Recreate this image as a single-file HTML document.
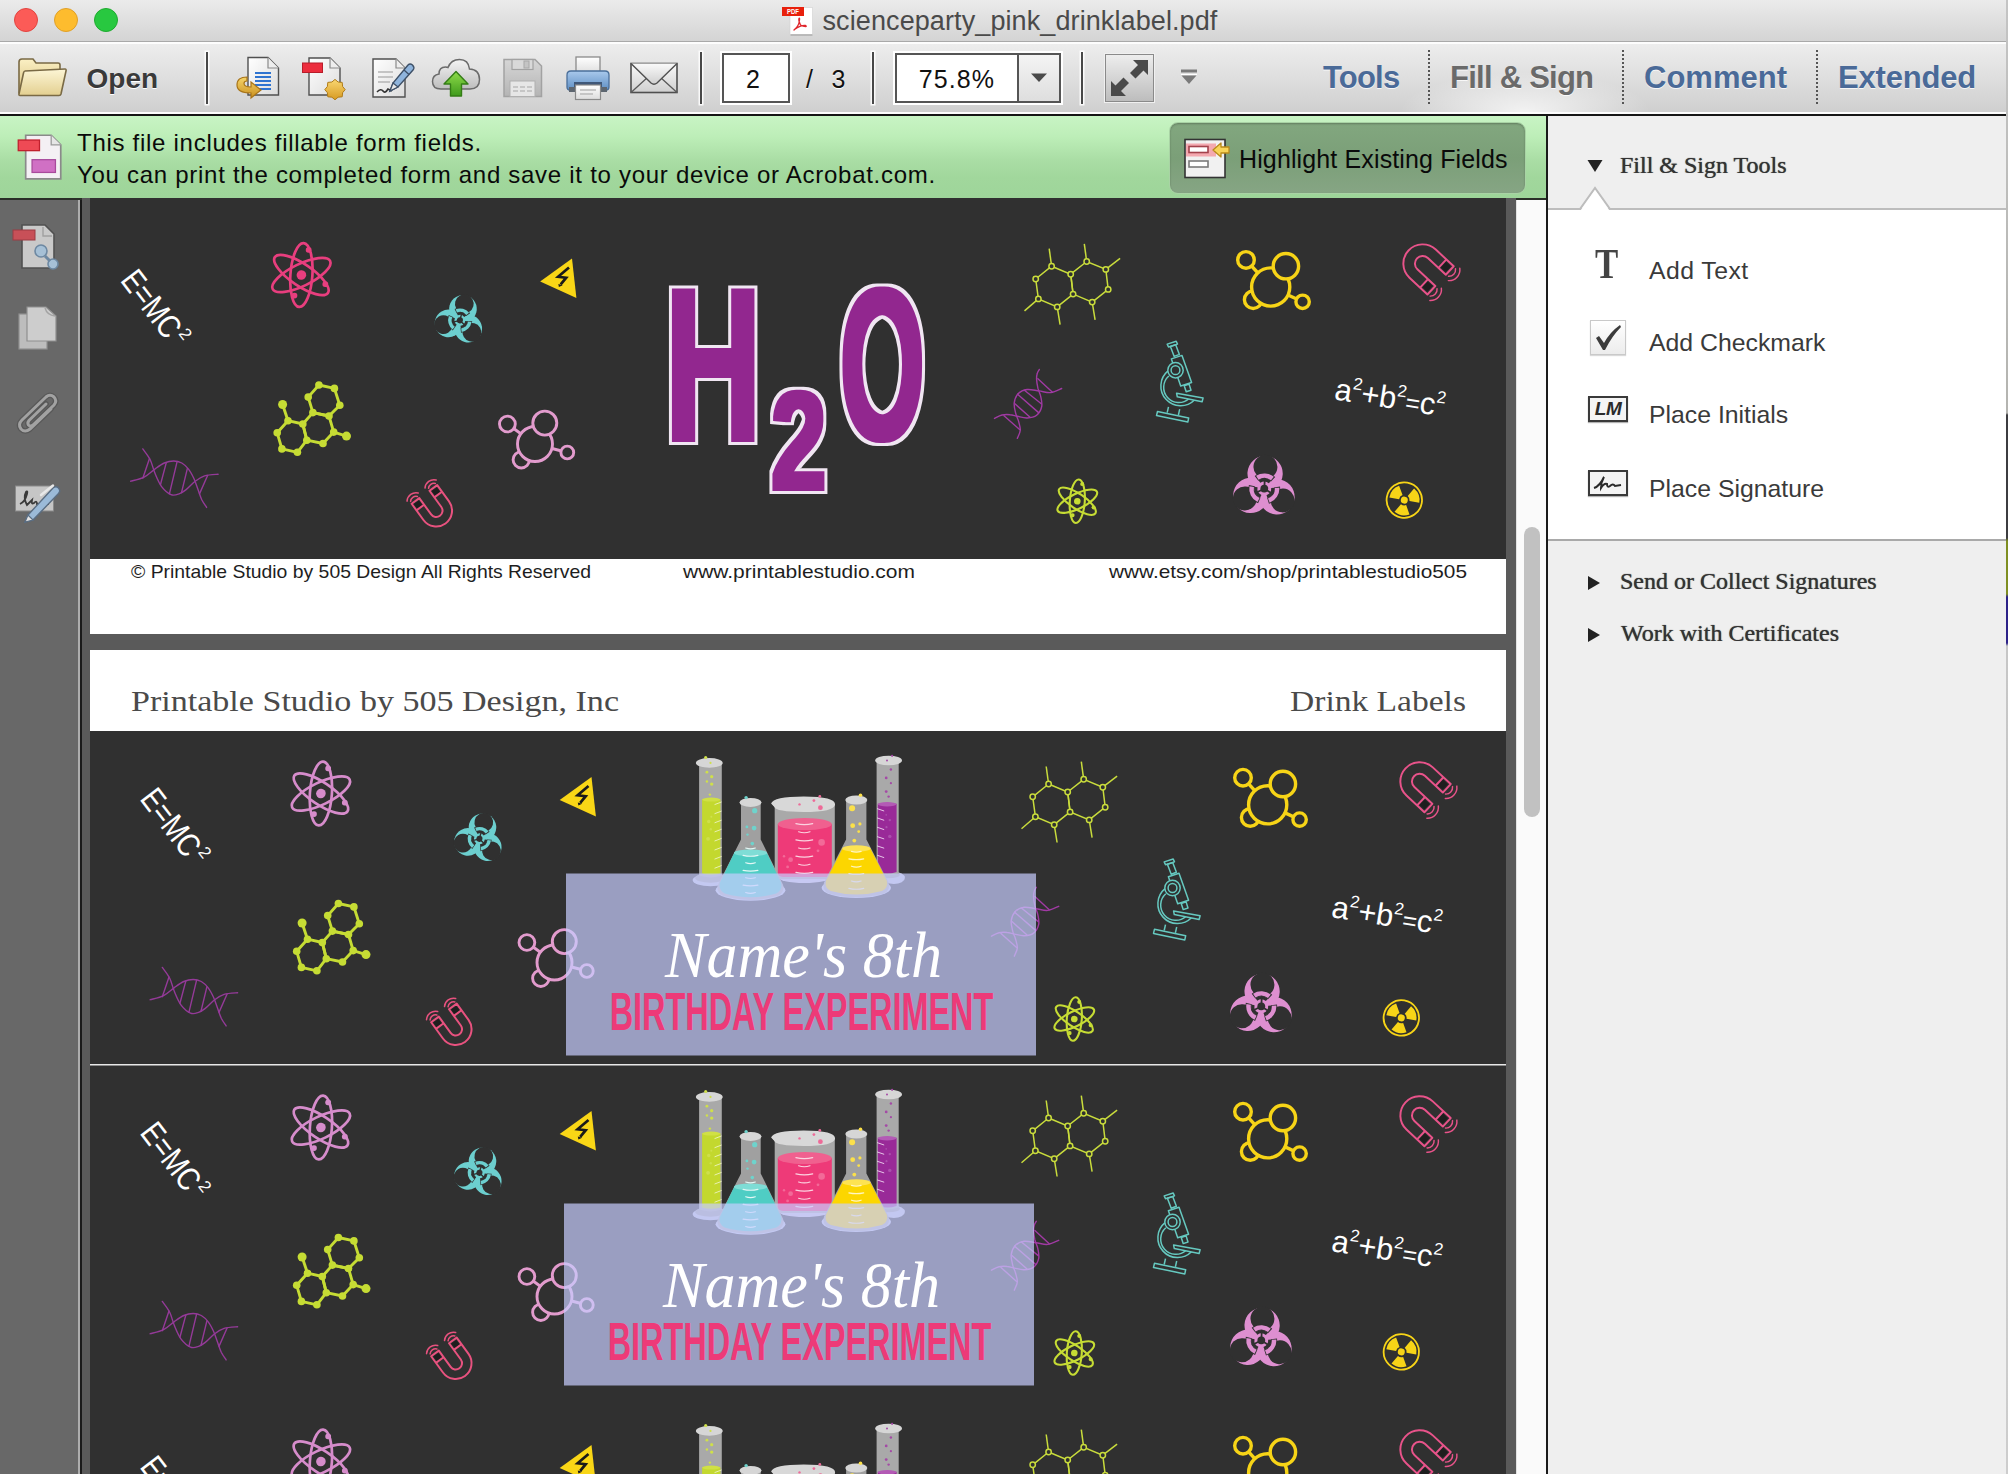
<!DOCTYPE html>
<html><head><meta charset="utf-8"><title>scienceparty_pink_drinklabel.pdf</title>
<style>
*{box-sizing:border-box;margin:0;padding:0}
html,body{width:2008px;height:1474px;overflow:hidden;background:#2a2d33;font-family:"Liberation Sans",sans-serif}
.abs{position:absolute}
#win{position:absolute;left:0;top:0;width:2006px;height:1474px;overflow:hidden;background:#ececec}
#titlebar{position:absolute;left:0;top:0;width:2006px;height:42px;background:linear-gradient(#ebebeb,#d4d4d4);border-bottom:1px solid #a9a9a9}
.tl{position:absolute;top:8px;width:24px;height:24px;border-radius:50%}
#title{position:absolute;left:822.5px;top:4px;font-size:27px;line-height:34px;color:#4a4a4a;white-space:nowrap;letter-spacing:0.1px}
#toolbar{position:absolute;left:0;top:42px;width:2006px;height:72px;background:linear-gradient(#ededed,#e0e0e0 45%,#cfcfcf);border-top:2px solid #fdfdfd;border-bottom:2px solid #fdfdfd}
#tbline{position:absolute;left:0;top:114px;width:2006px;height:2px;background:#161616}
.vsep{position:absolute;top:52px;width:2px;height:52px;background:#484848;box-shadow:0 0 0 1.5px rgba(255,255,255,.85)}
.dsep{position:absolute;top:50px;width:0;height:54px;border-left:2px dotted #555}
.tab{position:absolute;top:59px;font-weight:bold;font-size:31px;line-height:38px;color:#4a6a98;white-space:nowrap;text-shadow:0 1px 0 rgba(255,255,255,.8)}
.tbtxt{position:absolute;white-space:nowrap;color:#111}
#green{position:absolute;left:0;top:116px;width:1546px;height:84px;background:linear-gradient(#c8f4c4 0%,#bdeeb8 25%,#a9dda4 55%,#a1d79c 75%,#9ed59a 100%);border-bottom:2px solid #2a2f28}
#green .t{position:absolute;left:77px;margin-top:-1px;font-size:24px;letter-spacing:.72px;line-height:28px;color:#0a0a0a;white-space:nowrap}
#hbtn{position:absolute;left:1169px;top:122px;width:357px;height:72px;border-radius:9px;background:linear-gradient(#82a77f,#7b9f78 50%,#86a584);border:1px solid #a9d3a5;box-shadow:inset 0 1px 2px rgba(0,0,0,.25)}
#hbtn .t{position:absolute;left:69px;top:20px;font-size:25px;letter-spacing:.13px;line-height:32px;color:#0a0a0a;white-space:nowrap}
#side{position:absolute;left:0;top:200px;width:78px;height:1276px;background:#686868}
#sideline{position:absolute;left:79px;top:200px;width:3px;height:1276px;background:#1a1a1a}
#doc{position:absolute;left:82px;top:198px;width:1434px;height:1276px;background:#5a5a5a;overflow:hidden}
#scroll{position:absolute;left:1516px;top:200px;width:30px;height:1276px;background:#fafafa;border-left:1px solid #e2e2e2}
#thumb{position:absolute;left:1524px;top:527px;width:16px;height:290px;border-radius:8px;background:#c1c1c1}
#panel{position:absolute;left:1546px;top:116px;width:460px;height:1358px;background:#efefef;border-left:2px solid #1a1a1a}
.ptxt{position:absolute;font-size:24.8px;line-height:30px;color:#3a3a3a;white-space:nowrap}
.stxt{position:absolute;font-family:"Liberation Serif",serif;font-size:24px;line-height:28px;color:#333;white-space:nowrap;text-shadow:0 0 1px #333,0 1px 0 #fff}
</style></head><body>
<div id="win">
<div id="titlebar">
<div class="tl" style="left:14px;background:#fc5b57;border:1px solid #e2443f"></div>
<div class="tl" style="left:54px;background:#fdbc2e;border:1px solid #e0a028"></div>
<div class="tl" style="left:94px;background:#28c840;border:1px solid #1eab2f"></div>
<svg class="abs" style="left:780px;top:4px" width="36" height="34" viewBox="0 0 36 34">
<rect x="10" y="3.5" width="22.5" height="27" fill="#fff" stroke="#d0d0d0" stroke-width=".6"/>
<path d="M10.5 31 H32.5" stroke="#9a9a9a" stroke-width="1"/>
<rect x="2" y="3" width="22" height="9" fill="#e8200c"/>
<text x="13" y="10.3" font-family="Liberation Sans,sans-serif" font-weight="bold" font-size="7.5" fill="#fff" text-anchor="middle" textLength="12" lengthAdjust="spacingAndGlyphs">PDF</text>
<path d="M14.5 25.5 Q19 22 19.5 16 Q19.8 13.5 19 14.5 Q18.3 17 20.5 21 Q23 22.5 25.5 22.5 Q27 22.3 25.5 21.5 Q21 21 14.5 25.5 Q13.5 26.5 14.5 25.5" fill="none" stroke="#e0262c" stroke-width="1.3" stroke-linecap="round"/>
</svg>
<div id="title">scienceparty_pink_drinklabel.pdf</div>
</div>
<div id="toolbar"></div>
<div id="tbline"></div>
<!-- toolbar items -->
<svg class="abs" style="left:16px;top:55px" width="52" height="44" viewBox="0 0 52 44">
<defs><linearGradient id="fg1" x1="0" y1="0" x2="0" y2="1"><stop offset="0" stop-color="#fbf0c4"/><stop offset="1" stop-color="#d9c27f"/></linearGradient>
<linearGradient id="fg2" x1="0" y1="0" x2="0" y2="1"><stop offset="0" stop-color="#fdf6d6"/><stop offset="1" stop-color="#e3cf90"/></linearGradient></defs>
<path d="M3 7 Q3 4 6 4 L17 4 L20 8 L42 8 Q44 8 44 10 L44 38 L3 38 Z" fill="url(#fg1)" stroke="#7a6a45" stroke-width="1.6"/>
<path d="M9 16 L49 14 Q50.5 14 50 16 L45 39 Q44.6 40.5 43 40.5 L4 40.5 Q2.6 40.5 3 39 L7.5 18 Q8 16 9 16Z" fill="url(#fg2)" stroke="#7a6a45" stroke-width="1.6"/>
</svg>
<div class="tbtxt" style="left:86.5px;top:60px;font-weight:bold;font-size:28px;line-height:38px;color:#3a3a3a;text-shadow:0 1px 0 #fff">Open</div>
<div class="vsep" style="left:206px"></div>
<!-- icon1: export doc -->
<svg class="abs" style="left:234px;top:54px" width="48" height="48" viewBox="0 0 48 48">
<defs><linearGradient id="dg" x1="0" y1="0" x2="1" y2="1"><stop offset="0" stop-color="#ffffff"/><stop offset="1" stop-color="#dcdcdc"/></linearGradient>
<linearGradient id="ag" x1="0" y1="0" x2="0" y2="1"><stop offset="0" stop-color="#f6d56a"/><stop offset="1" stop-color="#c98f1e"/></linearGradient></defs>
<path d="M14 3.5 L34 3.5 L44.5 14 L44.5 41 L14 41 Z" fill="url(#dg)" stroke="#505050" stroke-width="1.4"/>
<path d="M34 3.5 L34 14 L44.5 14" fill="#eee" stroke="#8a8a8a" stroke-width="1.2"/>
<g stroke="#2f74d0" stroke-width="2"><path d="M21 19H37M21 23H37M21 27H37M21 31H37M24 35H37"/></g>
<path d="M13 23 Q3 23 3 31 Q3 39 17 39 L17 44 L27 36 L17 28 L17 33 Q10 33 10 29.5 Q10 27 13 27Z" fill="url(#ag)" stroke="#a87418" stroke-width="1.2"/>
</svg>
<!-- icon2: create pdf -->
<svg class="abs" style="left:300px;top:54px" width="48" height="48" viewBox="0 0 48 48">
<defs><linearGradient id="sg" x1="0" y1="0" x2="0" y2="1"><stop offset="0" stop-color="#f9d772"/><stop offset="1" stop-color="#d79a22"/></linearGradient></defs>
<path d="M9 4 L30 4 L40 14 L40 41 L9 41 Z" fill="url(#dg)" stroke="#505050" stroke-width="1.4"/>
<path d="M30 4 L30 14 L40 14" fill="#eee" stroke="#8a8a8a" stroke-width="1.2"/>
<rect x="2.5" y="9" width="20" height="9.5" fill="#ec2d3d" stroke="#b81d2a" stroke-width="1"/>
<path d="M35 25.4 L38.1 28 L42.2 28.4 L42.6 32.5 L45.2 35.6 L42.6 38.7 L42.2 42.8 L38.1 43.2 L35 45.8 L31.9 43.2 L27.8 42.8 L27.4 38.7 L24.8 35.6 L27.4 32.5 L27.8 28.4 L31.9 28Z" fill="url(#sg)" stroke="#b07c18" stroke-width="1"/>
</svg>
<!-- icon3: edit/sign doc -->
<svg class="abs" style="left:368px;top:54px" width="50" height="48" viewBox="0 0 50 48">
<path d="M5 5 L28 5 L37 14 L37 43 L5 43 Z" fill="url(#dg)" stroke="#505050" stroke-width="1.4"/>
<path d="M28 5 L28 14 L37 14" fill="#eee" stroke="#8a8a8a" stroke-width="1.2"/>
<g stroke="#b5b5b5" stroke-width="1.6"><path d="M10 18H25M10 23H25M10 28H22"/></g>
<path d="M9 38 Q13 34 15 37 Q17 40 20 35 L24 37" fill="none" stroke="#333" stroke-width="1.6"/>
<path d="M22 37 L25 29 L40 11 Q42 9 44.5 11 Q47 13.5 45 16 L30 33 Z" fill="#8fb4dc" stroke="#3d4f66" stroke-width="1.4"/>
<path d="M22 37 L25 29 L30 33Z" fill="#e9e9e9" stroke="#3d4f66" stroke-width="1.2"/>
<path d="M36 16 L41 20.5" stroke="#3d4f66" stroke-width="1.3"/>
</svg>
<!-- cloud -->
<svg class="abs" style="left:430px;top:55px" width="52" height="46" viewBox="0 0 52 46">
<defs><linearGradient id="cg" x1="0" y1="0" x2="0" y2="1"><stop offset="0" stop-color="#f4f4f4"/><stop offset="1" stop-color="#bdbdbd"/></linearGradient>
<linearGradient id="gg" x1="0" y1="0" x2="0" y2="1"><stop offset="0" stop-color="#8fdc4a"/><stop offset="1" stop-color="#3f9a1c"/></linearGradient></defs>
<path d="M11 34 Q2.5 34 2.5 26.5 Q2.5 20 9 19 Q9 12 15.5 12 Q17 12 18 12.5 Q21 4.5 29.5 4.5 Q38.5 4.5 39.5 14 Q49.5 14.5 49.5 24.5 Q49.5 34 40 34 Z" fill="url(#cg)" stroke="#6b6b6b" stroke-width="1.5"/>
<path d="M26 16.5 L38 29 L31.5 29 L31.5 41 L20.5 41 L20.5 29 L14 29 Z" fill="url(#gg)" stroke="#347d16" stroke-width="1.4" stroke-linejoin="round"/>
</svg>
<!-- floppy -->
<svg class="abs" style="left:501px;top:56px" width="44" height="44" viewBox="0 0 44 44">
<defs><linearGradient id="flg" x1="0" y1="0" x2="0" y2="1"><stop offset="0" stop-color="#d6d6d6"/><stop offset="1" stop-color="#b4b4b4"/></linearGradient></defs>
<path d="M3 3.5 L34 3.5 L40.5 10 L40.5 40.5 L3 40.5 Z" fill="url(#flg)" stroke="#a2a2a2" stroke-width="1.5"/>
<rect x="11" y="3.5" width="21" height="10" fill="#d9d9d9" stroke="#a2a2a2" stroke-width="1.2"/>
<rect x="23" y="5" width="5" height="7" fill="#c4c4c4" stroke="#a8a8a8" stroke-width="1"/>
<rect x="9" y="25" width="25" height="15.5" fill="#e6e6e6" stroke="#b0b0b0" stroke-width="1"/>
<g stroke="#c6c6c6" stroke-width="2" stroke-dasharray="5 2"><path d="M12 31H31M12 35H31"/></g>
</svg>
<!-- printer -->
<svg class="abs" style="left:564px;top:54px" width="48" height="48" viewBox="0 0 48 48">
<defs><linearGradient id="pg" x1="0" y1="0" x2="0" y2="1"><stop offset="0" stop-color="#a9c9ec"/><stop offset="1" stop-color="#5f8fc4"/></linearGradient>
<linearGradient id="wg" x1="0" y1="0" x2="0" y2="1"><stop offset="0" stop-color="#ffffff"/><stop offset="1" stop-color="#dcdcdc"/></linearGradient></defs>
<rect x="12" y="3" width="24" height="17" fill="url(#wg)" stroke="#8a8a8a" stroke-width="1.3"/>
<path d="M7 17 L41 17 Q45 17 45 21 L45 33 Q45 36 42 36 L6 36 Q3 36 3 33 L3 21 Q3 17 7 17Z" fill="url(#pg)" stroke="#4a6f9a" stroke-width="1.3"/>
<rect x="5" y="33" width="38" height="5" fill="#5d6670"/>
<rect x="10" y="28" width="28" height="5" fill="#3f5778"/>
<rect x="11.5" y="31" width="25" height="14.5" fill="url(#wg)" stroke="#8a8a8a" stroke-width="1.2"/>
<g stroke="#b9b9b9" stroke-width="1.3"><path d="M16 36H32M16 40H29"/></g>
</svg>
<!-- mail -->
<svg class="abs" style="left:629px;top:61px" width="50" height="34" viewBox="0 0 50 34">
<defs><linearGradient id="mg" x1="0" y1="0" x2="0" y2="1"><stop offset="0" stop-color="#fafafa"/><stop offset="1" stop-color="#cfcfcf"/></linearGradient></defs>
<rect x="2" y="2.5" width="46" height="29" fill="url(#mg)" stroke="#4f4f4f" stroke-width="1.6"/>
<path d="M2 31.5 L19 16 M48 31.5 L31 16" stroke="#5a5a5a" stroke-width="1.3" fill="none"/>
<path d="M2 2.5 L22 22 Q25 24.5 28 22 L48 2.5" fill="url(#mg)" stroke="#4f4f4f" stroke-width="1.4"/>
</svg>
<div class="vsep" style="left:700px"></div>
<div class="abs" style="left:720px;top:51px;width:72px;height:54px;background:#fff;border:2px solid #fff"><div style="width:100%;height:100%;border:2px solid #555"></div></div>
<div class="tbtxt" style="left:720px;top:61px;width:66px;text-align:center;font-size:25px;line-height:36px">2</div>
<div class="tbtxt" style="left:806px;top:61px;font-size:25px;line-height:36px;word-spacing:11.5px;text-shadow:0 1px 0 #fff">/ 3</div>
<div class="vsep" style="left:872px"></div>
<div class="abs" style="left:893px;top:51px;width:170px;height:54px;background:#fff;border:2px solid #fff"><div style="width:100%;height:100%;border:2px solid #555"></div></div>
<div class="abs" style="left:1017px;top:55px;width:42px;height:46px;background:linear-gradient(#f4f4f4,#dedede);border-left:2px solid #555"></div>
<svg class="abs" style="left:1029px;top:71px" width="20" height="12" viewBox="0 0 20 12"><path d="M2 2.5 L18 2.5 L10 11Z" fill="#4a4a4a"/></svg>
<div class="tbtxt" style="left:897px;top:61px;width:120px;text-align:center;font-size:25px;line-height:36px;letter-spacing:1.1px">75.8%</div>
<div class="vsep" style="left:1081px"></div>
<div class="abs" style="left:1105px;top:54px;width:49px;height:48px;border:1px solid #8a8a8a;background:linear-gradient(#ededed,#bdbdbd);box-shadow:0 0 0 1px #f0f0f0"></div>
<svg class="abs" style="left:1105px;top:54px" width="49" height="48" viewBox="0 0 49 48">
<g fill="#4a4a4a"><path d="M43 6 L43 21 L38.5 16.5 L30.5 24.5 L25 19 L33 11 L28 6Z"/><path d="M6 42 L6 27 L10.5 31.5 L18.5 23.5 L24 29 L16 37 L21 42Z"/></g>
</svg>
<svg class="abs" style="left:1180px;top:68px" width="18" height="20" viewBox="0 0 18 20"><rect x="1" y="1.5" width="16" height="3" fill="#7a7a7a"/><path d="M1.5 7.5 L16.5 7.5 L9 16Z" fill="#7a7a7a"/><path d="M1 6.5H17" stroke="#fff" stroke-width="1"/></svg>
<div class="abs" style="left:1400px;top:72px;width:250px;height:40px;background:radial-gradient(ellipse 125px 40px at 50% 100%,rgba(255,255,255,.75),rgba(255,255,255,0))"></div>
<div class="tab" style="left:1323px;letter-spacing:-.8px">Tools</div>
<div class="dsep" style="left:1428px"></div>
<div class="tab" style="left:1450px;color:#6a6a6a;letter-spacing:-.75px">Fill &amp; Sign</div>
<div class="dsep" style="left:1622px"></div>
<div class="tab" style="left:1644px">Comment</div>
<div class="dsep" style="left:1816px"></div>
<div class="tab" style="left:1838px;letter-spacing:-.2px">Extended</div>
<div id="green">
<svg class="abs" style="left:14px;top:15px" width="51" height="51" viewBox="0 0 48 48">
<path d="M11 4 L35 4 L44 13 L44 45 L11 45 Z" fill="#f4f0f4" stroke="#8a8a8a" stroke-width="1.6"/>
<path d="M35 4 L35 13 L44 13" fill="#e6e6e6" stroke="#9a9a9a" stroke-width="1.2"/>
<rect x="4" y="8.5" width="20" height="10" fill="#ee4a55" stroke="#c0202d" stroke-width="1.2"/>
<rect x="17" y="27" width="22" height="12" fill="#d070c4" stroke="#a84a9c" stroke-width="1.2"/>
</svg>
<div class="t" style="top:14px">This file includes fillable form fields.</div>
<div class="t" style="top:46px">You can print the completed form and save it to your device or Acrobat.com.</div>
</div>
<div id="hbtn">
<svg class="abs" style="left:13px;top:14px" width="50" height="44" viewBox="0 0 50 44">
<rect x="2" y="2.5" width="40" height="38" fill="#f1f1f1" stroke="#333" stroke-width="1.6"/>
<rect x="3" y="6.5" width="30" height="13" fill="#f4a9b0"/>
<rect x="6" y="9.5" width="19" height="6" fill="#fff" stroke="#a3424c" stroke-width="1.6"/>
<rect x="6" y="24" width="19" height="6" fill="#fff" stroke="#7a7a7a" stroke-width="1.6"/>
<path d="M30 13 L38 6 L38 10 L46 10 L46 16 L38 16 L38 20 Z" fill="#f8d458" stroke="#b98a1a" stroke-width="1.3" stroke-linejoin="round"/>
</svg>
<div class="t">Highlight Existing Fields</div>
</div>
<div id="side"></div>
<div class="abs" style="left:78px;top:200px;width:2px;height:1276px;background:#adadad"></div>
<div id="sideline" style="left:80px;width:2px"></div>
<!-- side icons -->
<svg class="abs" style="left:10px;top:221px" width="50" height="52" viewBox="0 0 50 52">
<path d="M12 4 L35 4 L44 13 L44 47 L12 47 Z" fill="#c9c9c9" stroke="#505050" stroke-width="1.6"/>
<path d="M33 6 L33 15 L42 15" fill="none" stroke="#a0a0a0" stroke-width="1.4"/>
<rect x="3" y="9" width="22" height="10" fill="#c85058" stroke="#9c3a42" stroke-width="1"/>
<circle cx="31" cy="30" r="6" fill="#a6c0d6" stroke="#6d88a2" stroke-width="1.6"/>
<circle cx="43" cy="43" r="5" fill="#a6c0d6" stroke="#6d88a2" stroke-width="1.6"/>
<path d="M35 35 L40 40" stroke="#6d88a2" stroke-width="3"/>
</svg>
<svg class="abs" style="left:16px;top:304px" width="44" height="48" viewBox="0 0 44 48">
<rect x="3" y="10" width="28" height="35" fill="#bdbdbd" stroke="#8f8f8f" stroke-width="1.2"/>
<path d="M11 3 L30 3 L40 12 L40 37 L11 37 Z" fill="#cdcdcd" stroke="#8f8f8f" stroke-width="1.2"/>
<path d="M29 4 Q31 11 39 12" fill="none" stroke="#a3a3a3" stroke-width="1.4"/>
</svg>
<svg class="abs" style="left:13px;top:389px" width="48" height="50" viewBox="0 0 48 50">
<path d="M38 20 L17 40 Q12 44 8 40 Q4.5 35.5 9 31 L33 8 Q37 4.5 41 8 Q44.5 12 41 16 L20 36 Q17.5 38 15.5 36 Q14 34 16 31.5 L33 15" fill="none" stroke="#585858" stroke-width="5.5" stroke-linecap="round"/>
<path d="M38 20 L17 40 Q12 44 8 40 Q4.5 35.5 9 31 L33 8 Q37 4.5 41 8 Q44.5 12 41 16 L20 36 Q17.5 38 15.5 36 Q14 34 16 31.5 L33 15" fill="none" stroke="#a2a2a2" stroke-width="3" stroke-linecap="round"/>
</svg>
<svg class="abs" style="left:13px;top:482px" width="50" height="44" viewBox="0 0 50 44">
<rect x="2.5" y="4" width="38" height="25" fill="#c6c6c6" stroke="#8a8a8a" stroke-width="1"/>
<path d="M7 22 Q12 20 14 12 Q15 8 13 10 Q10 16 14 23 Q17 20 19 18 Q18 23 21 21 Q24 18 24 22 L36 22" fill="none" stroke="#3a3a3a" stroke-width="1.8"/>
<path d="M12 40 L15 33 L40 6 Q43 3.5 45.5 6 Q48 9 45.5 11.5 L20 38 Z" fill="#9bbad8" stroke="#5a6d82" stroke-width="1.4"/>
<path d="M12 40 L15 33 L20 38Z" fill="#e4e4e4" stroke="#5a6d82" stroke-width="1.2"/>
<path d="M28 13 L40 3.5" stroke="#e8e8e8" stroke-width="2.5" stroke-linecap="round"/>
</svg>
<div id="doc">
<svg class="abs" style="left:0;top:0" width="1435" height="1276" viewBox="82 198 1435 1276"><rect x="90" y="198" width="1416" height="361" fill="#303030"/><rect x="90" y="559" width="1416" height="75" fill="#fff"/><rect x="90" y="650" width="1416" height="81" fill="#fff"/><rect x="90" y="731" width="1416" height="760" fill="#303030"/><rect x="90" y="1064" width="1416" height="1.5" fill="#e8e8e8"/><g clip-path="url(#cp1)"><g transform="translate(-19.5 -518.5)"><g transform="translate(139 799) rotate(52.5)" fill="#fff" font-family="'Liberation Sans',sans-serif"><text x="0" y="0" font-size="33" textLength="76" lengthAdjust="spacingAndGlyphs">E=MC</text><text x="78" y="-14" font-size="17">2</text></g><g transform="translate(320.9 793.5) rotate(4)"><g fill="none" stroke="#e83e7e" stroke-width="2.7"><ellipse rx="32" ry="11" transform="rotate(90)"/><ellipse rx="32" ry="11" transform="rotate(30)"/><ellipse rx="32" ry="11" transform="rotate(-30)"/></g><circle cx="0" cy="0" r="4.8" fill="#e83e7e"/><circle cx="5.5" cy="-25.5" r="2.9" fill="#e83e7e"/><circle cx="24.5" cy="7.5" r="2.9" fill="#e83e7e"/><circle cx="-5.5" cy="21" r="2.9" fill="#e83e7e"/></g><g transform="translate(479.4 838.8) rotate(15) scale(0.985)"><circle cx="0" cy="-12" r="14" fill="#6ccfcf"/><circle cx="10.4" cy="6" r="14" fill="#6ccfcf"/><circle cx="-10.4" cy="6" r="14" fill="#6ccfcf"/><circle cx="0" cy="-17.3" r="9.5" fill="#303030"/><circle cx="15" cy="8.6" r="9.5" fill="#303030"/><circle cx="-15" cy="8.6" r="9.5" fill="#303030"/><path d="M-4.2 -5.4A6.8 6.8 0 0 1 4.2 -5.4" fill="none" stroke="#303030" stroke-width="2.6"/><path d="M6.7 -0.9A6.8 6.8 0 0 1 2.5 6.3" fill="none" stroke="#303030" stroke-width="2.6"/><path d="M-2.5 6.3A6.8 6.8 0 0 1 -6.7 -0.9" fill="none" stroke="#303030" stroke-width="2.6"/><path d="M-6.6 -7.8A10.2 10.2 0 0 1 6.6 -7.8" fill="none" stroke="#303030" stroke-width="4.8"/><path d="M10 -1.8A10.2 10.2 0 0 1 3.5 9.6" fill="none" stroke="#303030" stroke-width="4.8"/><path d="M-3.5 9.6A10.2 10.2 0 0 1 -10 -1.8" fill="none" stroke="#303030" stroke-width="4.8"/><path d="M-6 -8.3A10.2 10.2 0 0 1 6 -8.3" fill="none" stroke="#6ccfcf" stroke-width="3.6"/><path d="M10.1 -1.1A10.2 10.2 0 0 1 4.1 9.3" fill="none" stroke="#6ccfcf" stroke-width="3.6"/><path d="M-4.1 9.3A10.2 10.2 0 0 1 -10.1 -1.1" fill="none" stroke="#6ccfcf" stroke-width="3.6"/><circle cx="0" cy="0" r="3.1" fill="#303030"/><path d="M0 -2L0 -8.3" stroke="#303030" stroke-width="1.4"/><path d="M1.7 1L7.2 4.1" stroke="#303030" stroke-width="1.4"/><path d="M-1.7 1L-7.2 4.1" stroke="#303030" stroke-width="1.4"/></g><polygon points="591.5,777 559.7,800 595.9,816.4" fill="#f9d616"/><path d="M588.5 785.9L577.6 795.3L585.7 796.2L580.2 802.9" fill="none" stroke="#1a1a1a" stroke-width="2.7" stroke-linejoin="miter"/><polygon points="577.8,802.5 582.2,803.8 578.4,805.4" fill="#1a1a1a"/><g stroke="#c6dc34" stroke-width="2.9" stroke-linejoin="round"><polygon points="338.4,903.5 353.9,906.9 359.3,923.7 348.5,934.5 332.4,931.1 327.7,915.6" fill="none"/><polygon points="332.4,931.1 348.5,934.5 353.2,950.6 342.5,962 326.3,958.7 322.3,942.5" fill="none"/><polygon points="322.3,942.5 326.3,958.7 316.9,970.8 301.4,967.4 296.7,951.3 307.5,939.2" fill="none"/><path d="M302.1 923L307.5 939.2"/><path d="M366 954.6L353.2 950.6"/></g><g fill="#c6dc34"><circle cx="348.5" cy="934.5" r="3.8"/><circle cx="359.3" cy="923.7" r="3.8"/><circle cx="338.4" cy="903.5" r="3.8"/><circle cx="332.4" cy="931.1" r="3.8"/><circle cx="301.4" cy="967.4" r="3.8"/><circle cx="307.5" cy="939.2" r="3.8"/><circle cx="327.7" cy="915.6" r="3.8"/><circle cx="326.3" cy="958.7" r="3.8"/><circle cx="296.7" cy="951.3" r="3.8"/><circle cx="342.5" cy="962" r="3.8"/><circle cx="322.3" cy="942.5" r="3.8"/><circle cx="353.2" cy="950.6" r="3.8"/><circle cx="353.9" cy="906.9" r="3.8"/><circle cx="316.9" cy="970.8" r="3.8"/><circle cx="302.1" cy="923" r="4.5"/><circle cx="366" cy="954.6" r="4.5"/></g><g stroke="#e29bcd" stroke-width="2.9" fill="none" transform="translate(554.5 962.5) scale(1)"><circle cx="-13.7" cy="15.8" r="8.2" fill="none"/><path d="M-27.6 -20L0 0"/><path d="M32.3 8.5L0 0"/><circle cx="0" cy="0" r="17.5" fill="#303030"/><circle cx="9.8" cy="-20.9" r="12" fill="#303030"/><circle cx="-27.6" cy="-20" r="7.9" fill="#303030"/><circle cx="32.3" cy="8.5" r="6.4" fill="#303030"/></g><g fill="none" stroke="#943a98" stroke-width="1.4" stroke-linecap="round"><path d="M162.3 967.4C163.5 969.2 167.6 974.1 169.7 978.2C171.7 982.2 172.5 987.1 174.4 991.6C176.3 996.1 178.4 1001.5 181.1 1005.1C183.8 1008.6 187.6 1011.9 190.5 1013.1C193.4 1014.4 196.1 1013.2 198.6 1012.4C201 1011.7 202.6 1010.5 205.3 1008.4C208 1006.3 211.6 1002 214.7 999.7C217.8 997.3 220.3 995.5 224.1 994.3C227.9 993.1 235.3 992.9 237.6 992.7"/><path d="M150.2 999.7C152.4 999 159.6 997.7 163.6 995.6C167.6 993.6 171 989.9 174.4 987.6C177.7 985.2 180.6 982.9 183.8 981.5C186.9 980.2 190.3 979.5 193.2 979.5C196.1 979.5 198.8 980.2 201.3 981.5C203.7 982.9 206 985 208 987.6C210 990.1 211.8 993.6 213.4 997C214.9 1000.3 216.1 1004.2 217.4 1007.7C218.7 1011.3 220 1015.5 221.4 1018.5C222.9 1021.5 225.4 1024.7 226.1 1025.9"/><path d="M169 977.1L162.3 996.7"/><path d="M185.8 981.1L180 1003"/><path d="M196.6 980.2L188.9 1012.4"/><path d="M206.9 986.9L201 1011.1"/><path d="M227.1 994L219 1012.4"/></g><g stroke="#e8527f" stroke-width="2" stroke-linejoin="round" transform="translate(454.5 1027.5) rotate(-36) scale(1)"><path d="M-15.8 -18L-15.8 2.1A15.8 15.8 0 0 0 15.8 2.1L15.8 -18L6.3 -18L6.3 2.1A6.3 6.3 0 0 1 -6.3 2.1L-6.3 -18Z" fill="none"/><rect x="-14.2" y="-16.4" width="6.3" height="5.6" fill="#1e1e1e" stroke="none"/><rect x="7.9" y="-16.4" width="6.3" height="5.6" fill="#1e1e1e" stroke="none"/><path d="M-15.8 -9.8L-6.3 -9.8"/><path d="M6.3 -9.8L15.8 -9.8"/><g fill="none" stroke-width="1.5" stroke-linecap="round"><path d="M-15.3 -20.5A5.5 5.5 0 0 1 -6.9 -20.5"/><path d="M-18 -22.8A9 9 0 0 1 -4.2 -22.8"/><path d="M6.9 -20.5A5.5 5.5 0 0 1 15.3 -20.5"/><path d="M4.2 -22.8A9 9 0 0 1 18 -22.8"/></g></g></g><g transform="translate(3 -517.8)"><g fill="none" stroke="#c9dc3c" stroke-width="1.5"><polygon points="1048.6,784 1067.7,792 1070.1,811.9 1054.2,824.7 1035.4,816.7 1032.7,796.8"/><polygon points="1067.7,792 1083.7,779.3 1102.8,787.2 1105.2,807.2 1089.2,819.9 1070.1,811.9"/><path d="M1048.6 784L1046.2 766.5"/><path d="M1083.7 779.3L1081.3 761.7"/><path d="M1102.8 787.2L1117.1 776.1"/><path d="M1089.2 819.9L1092.1 837.7"/><path d="M1054.2 824.7L1057.1 842.5"/><path d="M1035.4 816.7L1021.5 828.7"/><circle cx="1102.8" cy="787.2" r="2.7" fill="#303030"/><circle cx="1089.2" cy="819.9" r="2.7" fill="#303030"/><circle cx="1083.7" cy="779.3" r="2.7" fill="#303030"/><circle cx="1035.4" cy="816.7" r="2.7" fill="#303030"/><circle cx="1105.2" cy="807.2" r="2.7" fill="#303030"/><circle cx="1070.1" cy="811.9" r="2.7" fill="#303030"/><circle cx="1067.7" cy="792" r="2.7" fill="#303030"/><circle cx="1054.2" cy="824.7" r="2.7" fill="#303030"/><circle cx="1032.7" cy="796.8" r="2.7" fill="#303030"/><circle cx="1048.6" cy="784" r="2.7" fill="#303030"/></g><g stroke="#f7d417" stroke-width="3.4" fill="none" transform="translate(1267.7 804.8) scale(1)"><circle cx="-17.5" cy="12.7" r="8.8" fill="none"/><path d="M-24.7 -27.1L0 0"/><path d="M31.9 14.8L0 0"/><circle cx="0" cy="0" r="19.1" fill="#303030"/><circle cx="15.2" cy="-20.8" r="12.7" fill="#303030"/><circle cx="-24.7" cy="-27.1" r="8.3" fill="#303030"/><circle cx="31.9" cy="14.8" r="6.7" fill="#303030"/></g><g stroke="#e8538a" stroke-width="1.6" stroke-linejoin="round" transform="translate(1421.5 783.2) rotate(133) scale(1.22)"><path d="M-15.8 -18L-15.8 2.1A15.8 15.8 0 0 0 15.8 2.1L15.8 -18L6.3 -18L6.3 2.1A6.3 6.3 0 0 1 -6.3 2.1L-6.3 -18Z" fill="none"/><rect x="-14.2" y="-16.4" width="6.3" height="5.6" fill="#1e1e1e" stroke="none"/><rect x="7.9" y="-16.4" width="6.3" height="5.6" fill="#1e1e1e" stroke="none"/><path d="M-15.8 -9.8L-6.3 -9.8"/><path d="M6.3 -9.8L15.8 -9.8"/><g fill="none" stroke-width="1.2" stroke-linecap="round"><path d="M-15.3 -20.5A5.5 5.5 0 0 1 -6.9 -20.5"/><path d="M-18 -22.8A9 9 0 0 1 -4.2 -22.8"/><path d="M6.9 -20.5A5.5 5.5 0 0 1 15.3 -20.5"/><path d="M4.2 -22.8A9 9 0 0 1 18 -22.8"/></g></g><g fill="none" stroke="#a03aa3" stroke-width="1.4" stroke-linecap="round"><path d="M1014.3 956.2C1014.8 954.8 1017.1 950.9 1017.3 948.1C1017.5 945.2 1016.3 941.9 1015.6 939.2C1014.9 936.5 1013.6 934.8 1012.9 931.8C1012.2 928.7 1010.8 924.3 1011.2 920.9C1011.6 917.5 1013.1 913.7 1015.3 911.4C1017.4 909.2 1020.6 907.8 1024.1 907.3C1027.5 906.9 1032 908.2 1036 908.7C1039.9 909.2 1044 910.8 1047.8 910.4C1051.6 910 1056.9 907 1058.7 906.3"/><path d="M991.5 936.2C992.8 935.6 996.4 933.4 999 932.8C1001.6 932.2 1004.5 932.2 1007.1 932.5C1009.7 932.7 1011.8 933.6 1014.6 934.1C1017.4 934.7 1020.9 936 1024.1 935.8C1027.3 935.7 1031.2 935.1 1033.6 933.1C1036 931.2 1038 927.5 1038.7 924.3C1039.4 921.1 1038.3 917.2 1037.7 914.1C1037 911.1 1035.6 908.8 1034.9 906C1034.3 903.2 1033.7 899.7 1033.6 897.2C1033.5 894.7 1033.8 892.7 1034.3 891.1C1034.7 889.4 1036 888 1036.3 887.3"/><path d="M1001 933.5L1016.6 947.4"/><path d="M1011.9 921.6L1026.8 934.8"/><path d="M1014.6 912.1L1035.6 930.4"/><path d="M1021.4 908L1038.3 921.6"/><path d="M1034.9 896.5L1049.2 909.7"/></g><g fill="none" stroke="#66c9c0" stroke-width="1.5" stroke-linejoin="round"><polygon points="1164.2,861.9 1173.2,859 1174.5,861.9 1165.5,864.8"/><polygon points="1167.4,864.3 1172.7,862.6 1176.4,872.2 1171.2,874.2"/><polygon points="1168.4,876.7 1179,873.2 1188.6,900.3 1177.7,903.8"/><polygon points="1181.2,903.5 1186.1,901.9 1188,908 1183.2,909.6"/><path d="M1165 888.7A19.7 19.7 0 1 0 1191.5 917.8"/><path d="M1165.8 893.8A14.3 14.3 0 1 0 1185.9 916.5"/><circle cx="1172.5" cy="888" r="7.7" fill="#303030"/><circle cx="1172.5" cy="888" r="4.4"/><polygon points="1173.6,911.1 1200.1,915.7 1199.1,919.6 1174.3,914.6" fill="#303030"/><path d="M1165.5 924.7L1164.2 930.5"/><path d="M1176.7 927L1175.4 932.8"/><polygon points="1154.5,929.3 1185.7,935.7 1184.8,939.9 1153.5,933.4"/></g><text transform="translate(1330.5 917) rotate(9)" fill="#fff" font-family="'Liberation Sans',sans-serif" font-size="31">a<tspan dy="-13" font-size="17">2</tspan><tspan dy="13">+b</tspan><tspan dy="-13" font-size="17">2</tspan><tspan dy="13" font-size="25">=</tspan><tspan>c</tspan><tspan dy="-13" font-size="17">2</tspan></text><g transform="translate(1074.3 1019) rotate(4)"><g fill="none" stroke="#c6dc34" stroke-width="2.1"><ellipse rx="21.8" ry="7.5" transform="rotate(90)"/><ellipse rx="21.8" ry="7.5" transform="rotate(30)"/><ellipse rx="21.8" ry="7.5" transform="rotate(-30)"/></g><circle cx="0" cy="0" r="3.3" fill="#c6dc34"/><circle cx="3.7" cy="-17.4" r="2" fill="#c6dc34"/><circle cx="16.7" cy="5.1" r="2" fill="#c6dc34"/><circle cx="-3.7" cy="14.3" r="2" fill="#c6dc34"/></g><g transform="translate(1261.3 1006.4) rotate(3) scale(1.26)"><circle cx="0" cy="-12" r="14" fill="#de8fd0"/><circle cx="10.4" cy="6" r="14" fill="#de8fd0"/><circle cx="-10.4" cy="6" r="14" fill="#de8fd0"/><circle cx="0" cy="-17.3" r="9.5" fill="#303030"/><circle cx="15" cy="8.6" r="9.5" fill="#303030"/><circle cx="-15" cy="8.6" r="9.5" fill="#303030"/><path d="M-4.2 -5.4A6.8 6.8 0 0 1 4.2 -5.4" fill="none" stroke="#303030" stroke-width="2.6"/><path d="M6.7 -0.9A6.8 6.8 0 0 1 2.5 6.3" fill="none" stroke="#303030" stroke-width="2.6"/><path d="M-2.5 6.3A6.8 6.8 0 0 1 -6.7 -0.9" fill="none" stroke="#303030" stroke-width="2.6"/><path d="M-6.6 -7.8A10.2 10.2 0 0 1 6.6 -7.8" fill="none" stroke="#303030" stroke-width="4.8"/><path d="M10 -1.8A10.2 10.2 0 0 1 3.5 9.6" fill="none" stroke="#303030" stroke-width="4.8"/><path d="M-3.5 9.6A10.2 10.2 0 0 1 -10 -1.8" fill="none" stroke="#303030" stroke-width="4.8"/><path d="M-6 -8.3A10.2 10.2 0 0 1 6 -8.3" fill="none" stroke="#de8fd0" stroke-width="3.6"/><path d="M10.1 -1.1A10.2 10.2 0 0 1 4.1 9.3" fill="none" stroke="#de8fd0" stroke-width="3.6"/><path d="M-4.1 9.3A10.2 10.2 0 0 1 -10.1 -1.1" fill="none" stroke="#de8fd0" stroke-width="3.6"/><circle cx="0" cy="0" r="3.1" fill="#303030"/><path d="M0 -2L0 -8.3" stroke="#303030" stroke-width="1.4"/><path d="M1.7 1L7.2 4.1" stroke="#303030" stroke-width="1.4"/><path d="M-1.7 1L-7.2 4.1" stroke="#303030" stroke-width="1.4"/></g><g transform="translate(1401.3 1017.9) rotate(10)"><circle cx="0" cy="0" r="17.7" fill="none" stroke="#f7d417" stroke-width="1.8"/><path d="M-5.3 0L-15.2 0A15.2 15.2 0 0 1 -7.6 -13.2L-2.6 -4.6A5.3 5.3 0 0 0 -5.3 0Z" fill="#f7d417"/><path d="M2.7 -4.6L7.6 -13.2A15.2 15.2 0 0 1 15.2 0L5.3 0A5.3 5.3 0 0 0 2.7 -4.6Z" fill="#f7d417"/><path d="M2.7 4.6L7.6 13.2A15.2 15.2 0 0 1 -7.6 13.2L-2.6 4.6A5.3 5.3 0 0 0 2.7 4.6Z" fill="#f7d417"/><circle cx="0" cy="0" r="3.5" fill="#f7d417"/></g></g></g><defs><clipPath id="cp1"><rect x="90" y="198" width="1416" height="361"/></clipPath></defs><defs><filter id="h2of" x="-10%" y="-10%" width="120%" height="120%" color-interpolation-filters="sRGB"><feMorphology in="SourceAlpha" operator="dilate" radius="5" result="d5"/><feFlood flood-color="#f0e6f2"/><feComposite in2="d5" operator="in" result="w"/><feMorphology in="SourceAlpha" operator="dilate" radius="2" result="d2"/><feFlood flood-color="#92278f"/><feComposite in2="d2" operator="in" result="p"/><feMerge><feMergeNode in="w"/><feMergeNode in="p"/></feMerge></filter></defs><g font-family="'Liberation Sans',sans-serif" font-size="18.5" fill="#1e1e1e"><text x="131" y="577.5" textLength="460" lengthAdjust="spacingAndGlyphs">© Printable Studio by 505 Design All Rights Reserved</text><text x="683" y="577.5" textLength="232" lengthAdjust="spacingAndGlyphs">www.printablestudio.com</text><text x="1109" y="577.5" textLength="358" lengthAdjust="spacingAndGlyphs">www.etsy.com/shop/printablestudio505</text></g><g font-family="'Liberation Serif',serif" font-size="28.5" fill="#4a4a4a"><text x="131" y="711" textLength="488" lengthAdjust="spacingAndGlyphs">Printable Studio by 505 Design, Inc</text><text x="1290" y="711" textLength="176" lengthAdjust="spacingAndGlyphs">Drink Labels</text></g><g transform="translate(0 0)"><g transform="translate(139 799) rotate(52.5)" fill="#fff" font-family="'Liberation Sans',sans-serif"><text x="0" y="0" font-size="33" textLength="76" lengthAdjust="spacingAndGlyphs">E=MC</text><text x="78" y="-14" font-size="17">2</text></g><g transform="translate(320.9 793.5) rotate(4)"><g fill="none" stroke="#d68ccb" stroke-width="2.7"><ellipse rx="32" ry="11" transform="rotate(90)"/><ellipse rx="32" ry="11" transform="rotate(30)"/><ellipse rx="32" ry="11" transform="rotate(-30)"/></g><circle cx="0" cy="0" r="4.8" fill="#d68ccb"/><circle cx="5.5" cy="-25.5" r="2.9" fill="#d68ccb"/><circle cx="24.5" cy="7.5" r="2.9" fill="#d68ccb"/><circle cx="-5.5" cy="21" r="2.9" fill="#d68ccb"/></g><g transform="translate(479.4 838.8) rotate(15) scale(0.985)"><circle cx="0" cy="-12" r="14" fill="#6ccfcf"/><circle cx="10.4" cy="6" r="14" fill="#6ccfcf"/><circle cx="-10.4" cy="6" r="14" fill="#6ccfcf"/><circle cx="0" cy="-17.3" r="9.5" fill="#303030"/><circle cx="15" cy="8.6" r="9.5" fill="#303030"/><circle cx="-15" cy="8.6" r="9.5" fill="#303030"/><path d="M-4.2 -5.4A6.8 6.8 0 0 1 4.2 -5.4" fill="none" stroke="#303030" stroke-width="2.6"/><path d="M6.7 -0.9A6.8 6.8 0 0 1 2.5 6.3" fill="none" stroke="#303030" stroke-width="2.6"/><path d="M-2.5 6.3A6.8 6.8 0 0 1 -6.7 -0.9" fill="none" stroke="#303030" stroke-width="2.6"/><path d="M-6.6 -7.8A10.2 10.2 0 0 1 6.6 -7.8" fill="none" stroke="#303030" stroke-width="4.8"/><path d="M10 -1.8A10.2 10.2 0 0 1 3.5 9.6" fill="none" stroke="#303030" stroke-width="4.8"/><path d="M-3.5 9.6A10.2 10.2 0 0 1 -10 -1.8" fill="none" stroke="#303030" stroke-width="4.8"/><path d="M-6 -8.3A10.2 10.2 0 0 1 6 -8.3" fill="none" stroke="#6ccfcf" stroke-width="3.6"/><path d="M10.1 -1.1A10.2 10.2 0 0 1 4.1 9.3" fill="none" stroke="#6ccfcf" stroke-width="3.6"/><path d="M-4.1 9.3A10.2 10.2 0 0 1 -10.1 -1.1" fill="none" stroke="#6ccfcf" stroke-width="3.6"/><circle cx="0" cy="0" r="3.1" fill="#303030"/><path d="M0 -2L0 -8.3" stroke="#303030" stroke-width="1.4"/><path d="M1.7 1L7.2 4.1" stroke="#303030" stroke-width="1.4"/><path d="M-1.7 1L-7.2 4.1" stroke="#303030" stroke-width="1.4"/></g><polygon points="591.5,777 559.7,800 595.9,816.4" fill="#f9d616"/><path d="M588.5 785.9L577.6 795.3L585.7 796.2L580.2 802.9" fill="none" stroke="#1a1a1a" stroke-width="2.7" stroke-linejoin="miter"/><polygon points="577.8,802.5 582.2,803.8 578.4,805.4" fill="#1a1a1a"/><g stroke="#c6dc34" stroke-width="2.9" stroke-linejoin="round"><polygon points="338.4,903.5 353.9,906.9 359.3,923.7 348.5,934.5 332.4,931.1 327.7,915.6" fill="none"/><polygon points="332.4,931.1 348.5,934.5 353.2,950.6 342.5,962 326.3,958.7 322.3,942.5" fill="none"/><polygon points="322.3,942.5 326.3,958.7 316.9,970.8 301.4,967.4 296.7,951.3 307.5,939.2" fill="none"/><path d="M302.1 923L307.5 939.2"/><path d="M366 954.6L353.2 950.6"/></g><g fill="#c6dc34"><circle cx="348.5" cy="934.5" r="3.8"/><circle cx="359.3" cy="923.7" r="3.8"/><circle cx="338.4" cy="903.5" r="3.8"/><circle cx="332.4" cy="931.1" r="3.8"/><circle cx="301.4" cy="967.4" r="3.8"/><circle cx="307.5" cy="939.2" r="3.8"/><circle cx="327.7" cy="915.6" r="3.8"/><circle cx="326.3" cy="958.7" r="3.8"/><circle cx="296.7" cy="951.3" r="3.8"/><circle cx="342.5" cy="962" r="3.8"/><circle cx="322.3" cy="942.5" r="3.8"/><circle cx="353.2" cy="950.6" r="3.8"/><circle cx="353.9" cy="906.9" r="3.8"/><circle cx="316.9" cy="970.8" r="3.8"/><circle cx="302.1" cy="923" r="4.5"/><circle cx="366" cy="954.6" r="4.5"/></g><g stroke="#e29bcd" stroke-width="2.9" fill="none" transform="translate(554.5 962.5) scale(1)"><circle cx="-13.7" cy="15.8" r="8.2" fill="none"/><path d="M-27.6 -20L0 0"/><path d="M32.3 8.5L0 0"/><circle cx="0" cy="0" r="17.5" fill="#303030"/><circle cx="9.8" cy="-20.9" r="12" fill="#303030"/><circle cx="-27.6" cy="-20" r="7.9" fill="#303030"/><circle cx="32.3" cy="8.5" r="6.4" fill="#303030"/></g><g fill="none" stroke="#943a98" stroke-width="1.4" stroke-linecap="round"><path d="M162.3 967.4C163.5 969.2 167.6 974.1 169.7 978.2C171.7 982.2 172.5 987.1 174.4 991.6C176.3 996.1 178.4 1001.5 181.1 1005.1C183.8 1008.6 187.6 1011.9 190.5 1013.1C193.4 1014.4 196.1 1013.2 198.6 1012.4C201 1011.7 202.6 1010.5 205.3 1008.4C208 1006.3 211.6 1002 214.7 999.7C217.8 997.3 220.3 995.5 224.1 994.3C227.9 993.1 235.3 992.9 237.6 992.7"/><path d="M150.2 999.7C152.4 999 159.6 997.7 163.6 995.6C167.6 993.6 171 989.9 174.4 987.6C177.7 985.2 180.6 982.9 183.8 981.5C186.9 980.2 190.3 979.5 193.2 979.5C196.1 979.5 198.8 980.2 201.3 981.5C203.7 982.9 206 985 208 987.6C210 990.1 211.8 993.6 213.4 997C214.9 1000.3 216.1 1004.2 217.4 1007.7C218.7 1011.3 220 1015.5 221.4 1018.5C222.9 1021.5 225.4 1024.7 226.1 1025.9"/><path d="M169 977.1L162.3 996.7"/><path d="M185.8 981.1L180 1003"/><path d="M196.6 980.2L188.9 1012.4"/><path d="M206.9 986.9L201 1011.1"/><path d="M227.1 994L219 1012.4"/></g><g stroke="#e8527f" stroke-width="2" stroke-linejoin="round" transform="translate(454.5 1027.5) rotate(-36) scale(1)"><path d="M-15.8 -18L-15.8 2.1A15.8 15.8 0 0 0 15.8 2.1L15.8 -18L6.3 -18L6.3 2.1A6.3 6.3 0 0 1 -6.3 2.1L-6.3 -18Z" fill="none"/><rect x="-14.2" y="-16.4" width="6.3" height="5.6" fill="#1e1e1e" stroke="none"/><rect x="7.9" y="-16.4" width="6.3" height="5.6" fill="#1e1e1e" stroke="none"/><path d="M-15.8 -9.8L-6.3 -9.8"/><path d="M6.3 -9.8L15.8 -9.8"/><g fill="none" stroke-width="1.5" stroke-linecap="round"><path d="M-15.3 -20.5A5.5 5.5 0 0 1 -6.9 -20.5"/><path d="M-18 -22.8A9 9 0 0 1 -4.2 -22.8"/><path d="M6.9 -20.5A5.5 5.5 0 0 1 15.3 -20.5"/><path d="M4.2 -22.8A9 9 0 0 1 18 -22.8"/></g></g><g fill="none" stroke="#c9dc3c" stroke-width="1.5"><polygon points="1048.6,784 1067.7,792 1070.1,811.9 1054.2,824.7 1035.4,816.7 1032.7,796.8"/><polygon points="1067.7,792 1083.7,779.3 1102.8,787.2 1105.2,807.2 1089.2,819.9 1070.1,811.9"/><path d="M1048.6 784L1046.2 766.5"/><path d="M1083.7 779.3L1081.3 761.7"/><path d="M1102.8 787.2L1117.1 776.1"/><path d="M1089.2 819.9L1092.1 837.7"/><path d="M1054.2 824.7L1057.1 842.5"/><path d="M1035.4 816.7L1021.5 828.7"/><circle cx="1102.8" cy="787.2" r="2.7" fill="#303030"/><circle cx="1089.2" cy="819.9" r="2.7" fill="#303030"/><circle cx="1083.7" cy="779.3" r="2.7" fill="#303030"/><circle cx="1035.4" cy="816.7" r="2.7" fill="#303030"/><circle cx="1105.2" cy="807.2" r="2.7" fill="#303030"/><circle cx="1070.1" cy="811.9" r="2.7" fill="#303030"/><circle cx="1067.7" cy="792" r="2.7" fill="#303030"/><circle cx="1054.2" cy="824.7" r="2.7" fill="#303030"/><circle cx="1032.7" cy="796.8" r="2.7" fill="#303030"/><circle cx="1048.6" cy="784" r="2.7" fill="#303030"/></g><g stroke="#f7d417" stroke-width="3.4" fill="none" transform="translate(1267.7 804.8) scale(1)"><circle cx="-17.5" cy="12.7" r="8.8" fill="none"/><path d="M-24.7 -27.1L0 0"/><path d="M31.9 14.8L0 0"/><circle cx="0" cy="0" r="19.1" fill="#303030"/><circle cx="15.2" cy="-20.8" r="12.7" fill="#303030"/><circle cx="-24.7" cy="-27.1" r="8.3" fill="#303030"/><circle cx="31.9" cy="14.8" r="6.7" fill="#303030"/></g><g stroke="#e8538a" stroke-width="1.6" stroke-linejoin="round" transform="translate(1421.5 783.2) rotate(133) scale(1.22)"><path d="M-15.8 -18L-15.8 2.1A15.8 15.8 0 0 0 15.8 2.1L15.8 -18L6.3 -18L6.3 2.1A6.3 6.3 0 0 1 -6.3 2.1L-6.3 -18Z" fill="none"/><rect x="-14.2" y="-16.4" width="6.3" height="5.6" fill="#1e1e1e" stroke="none"/><rect x="7.9" y="-16.4" width="6.3" height="5.6" fill="#1e1e1e" stroke="none"/><path d="M-15.8 -9.8L-6.3 -9.8"/><path d="M6.3 -9.8L15.8 -9.8"/><g fill="none" stroke-width="1.2" stroke-linecap="round"><path d="M-15.3 -20.5A5.5 5.5 0 0 1 -6.9 -20.5"/><path d="M-18 -22.8A9 9 0 0 1 -4.2 -22.8"/><path d="M6.9 -20.5A5.5 5.5 0 0 1 15.3 -20.5"/><path d="M4.2 -22.8A9 9 0 0 1 18 -22.8"/></g></g><g fill="none" stroke="#a03aa3" stroke-width="1.4" stroke-linecap="round"><path d="M1014.3 956.2C1014.8 954.8 1017.1 950.9 1017.3 948.1C1017.5 945.2 1016.3 941.9 1015.6 939.2C1014.9 936.5 1013.6 934.8 1012.9 931.8C1012.2 928.7 1010.8 924.3 1011.2 920.9C1011.6 917.5 1013.1 913.7 1015.3 911.4C1017.4 909.2 1020.6 907.8 1024.1 907.3C1027.5 906.9 1032 908.2 1036 908.7C1039.9 909.2 1044 910.8 1047.8 910.4C1051.6 910 1056.9 907 1058.7 906.3"/><path d="M991.5 936.2C992.8 935.6 996.4 933.4 999 932.8C1001.6 932.2 1004.5 932.2 1007.1 932.5C1009.7 932.7 1011.8 933.6 1014.6 934.1C1017.4 934.7 1020.9 936 1024.1 935.8C1027.3 935.7 1031.2 935.1 1033.6 933.1C1036 931.2 1038 927.5 1038.7 924.3C1039.4 921.1 1038.3 917.2 1037.7 914.1C1037 911.1 1035.6 908.8 1034.9 906C1034.3 903.2 1033.7 899.7 1033.6 897.2C1033.5 894.7 1033.8 892.7 1034.3 891.1C1034.7 889.4 1036 888 1036.3 887.3"/><path d="M1001 933.5L1016.6 947.4"/><path d="M1011.9 921.6L1026.8 934.8"/><path d="M1014.6 912.1L1035.6 930.4"/><path d="M1021.4 908L1038.3 921.6"/><path d="M1034.9 896.5L1049.2 909.7"/></g><g fill="none" stroke="#66c9c0" stroke-width="1.5" stroke-linejoin="round"><polygon points="1164.2,861.9 1173.2,859 1174.5,861.9 1165.5,864.8"/><polygon points="1167.4,864.3 1172.7,862.6 1176.4,872.2 1171.2,874.2"/><polygon points="1168.4,876.7 1179,873.2 1188.6,900.3 1177.7,903.8"/><polygon points="1181.2,903.5 1186.1,901.9 1188,908 1183.2,909.6"/><path d="M1165 888.7A19.7 19.7 0 1 0 1191.5 917.8"/><path d="M1165.8 893.8A14.3 14.3 0 1 0 1185.9 916.5"/><circle cx="1172.5" cy="888" r="7.7" fill="#303030"/><circle cx="1172.5" cy="888" r="4.4"/><polygon points="1173.6,911.1 1200.1,915.7 1199.1,919.6 1174.3,914.6" fill="#303030"/><path d="M1165.5 924.7L1164.2 930.5"/><path d="M1176.7 927L1175.4 932.8"/><polygon points="1154.5,929.3 1185.7,935.7 1184.8,939.9 1153.5,933.4"/></g><text transform="translate(1330.5 917) rotate(9)" fill="#fff" font-family="'Liberation Sans',sans-serif" font-size="31">a<tspan dy="-13" font-size="17">2</tspan><tspan dy="13">+b</tspan><tspan dy="-13" font-size="17">2</tspan><tspan dy="13" font-size="25">=</tspan><tspan>c</tspan><tspan dy="-13" font-size="17">2</tspan></text><g transform="translate(1074.3 1019) rotate(4)"><g fill="none" stroke="#c6dc34" stroke-width="2.1"><ellipse rx="21.8" ry="7.5" transform="rotate(90)"/><ellipse rx="21.8" ry="7.5" transform="rotate(30)"/><ellipse rx="21.8" ry="7.5" transform="rotate(-30)"/></g><circle cx="0" cy="0" r="3.3" fill="#c6dc34"/><circle cx="3.7" cy="-17.4" r="2" fill="#c6dc34"/><circle cx="16.7" cy="5.1" r="2" fill="#c6dc34"/><circle cx="-3.7" cy="14.3" r="2" fill="#c6dc34"/></g><g transform="translate(1261.3 1006.4) rotate(3) scale(1.26)"><circle cx="0" cy="-12" r="14" fill="#de8fd0"/><circle cx="10.4" cy="6" r="14" fill="#de8fd0"/><circle cx="-10.4" cy="6" r="14" fill="#de8fd0"/><circle cx="0" cy="-17.3" r="9.5" fill="#303030"/><circle cx="15" cy="8.6" r="9.5" fill="#303030"/><circle cx="-15" cy="8.6" r="9.5" fill="#303030"/><path d="M-4.2 -5.4A6.8 6.8 0 0 1 4.2 -5.4" fill="none" stroke="#303030" stroke-width="2.6"/><path d="M6.7 -0.9A6.8 6.8 0 0 1 2.5 6.3" fill="none" stroke="#303030" stroke-width="2.6"/><path d="M-2.5 6.3A6.8 6.8 0 0 1 -6.7 -0.9" fill="none" stroke="#303030" stroke-width="2.6"/><path d="M-6.6 -7.8A10.2 10.2 0 0 1 6.6 -7.8" fill="none" stroke="#303030" stroke-width="4.8"/><path d="M10 -1.8A10.2 10.2 0 0 1 3.5 9.6" fill="none" stroke="#303030" stroke-width="4.8"/><path d="M-3.5 9.6A10.2 10.2 0 0 1 -10 -1.8" fill="none" stroke="#303030" stroke-width="4.8"/><path d="M-6 -8.3A10.2 10.2 0 0 1 6 -8.3" fill="none" stroke="#de8fd0" stroke-width="3.6"/><path d="M10.1 -1.1A10.2 10.2 0 0 1 4.1 9.3" fill="none" stroke="#de8fd0" stroke-width="3.6"/><path d="M-4.1 9.3A10.2 10.2 0 0 1 -10.1 -1.1" fill="none" stroke="#de8fd0" stroke-width="3.6"/><circle cx="0" cy="0" r="3.1" fill="#303030"/><path d="M0 -2L0 -8.3" stroke="#303030" stroke-width="1.4"/><path d="M1.7 1L7.2 4.1" stroke="#303030" stroke-width="1.4"/><path d="M-1.7 1L-7.2 4.1" stroke="#303030" stroke-width="1.4"/></g><g transform="translate(1401.3 1017.9) rotate(10)"><circle cx="0" cy="0" r="17.7" fill="none" stroke="#f7d417" stroke-width="1.8"/><path d="M-5.3 0L-15.2 0A15.2 15.2 0 0 1 -7.6 -13.2L-2.6 -4.6A5.3 5.3 0 0 0 -5.3 0Z" fill="#f7d417"/><path d="M2.7 -4.6L7.6 -13.2A15.2 15.2 0 0 1 15.2 0L5.3 0A5.3 5.3 0 0 0 2.7 -4.6Z" fill="#f7d417"/><path d="M2.7 4.6L7.6 13.2A15.2 15.2 0 0 1 -7.6 13.2L-2.6 4.6A5.3 5.3 0 0 0 2.7 4.6Z" fill="#f7d417"/><circle cx="0" cy="0" r="3.5" fill="#f7d417"/></g><ellipse cx="710.5" cy="880.1" rx="17.9" ry="6.2" fill="#b9bccf"/><ellipse cx="710.5" cy="877.9" rx="15.3" ry="4.8" fill="#9c9c9c"/><path d="M699.1 764.1L699.1 875.3Q710.5 879.5 721.8 875.3L721.8 764.1Z" fill="#a9a9a9"/><path d="M702.1 799.4L702.1 873.5Q711.1 876.2 720.4 873.5L720.4 799.4Z" fill="#c3d82e"/><ellipse cx="711.2" cy="799.6" rx="9.2" ry="2" fill="#d0e045"/><ellipse cx="709.3" cy="762.9" rx="13.4" ry="4.8" fill="#d6d6d6"/><g stroke="#e8f0b0" stroke-width="1" stroke-linecap="round"><path d="M714.9 804.5L721.2 802.1"/><path d="M714.9 813.6L721.2 811.2"/><path d="M714.9 822.7L721.2 820.3"/><path d="M714.9 831.8L721.2 829.4"/><path d="M714.9 840.9L721.2 838.5"/><path d="M714.9 849.9L721.2 847.5"/><path d="M714.9 859L721.2 856.6"/><path d="M714.9 868.1L721.2 865.7"/></g><g fill="#cfe04a"><circle cx="706.9" cy="772.2" r="1.4"/><circle cx="711.7" cy="776.7" r="1.6"/><circle cx="706.9" cy="781.5" r="1.2"/><circle cx="711.7" cy="784.1" r="1.7"/><circle cx="709.9" cy="794.6" r="1.2"/><circle cx="705.7" cy="757.5" r="1.6"/><circle cx="710.5" cy="762.9" r="1.1"/></g><g fill="#d3e35a" opacity=".7"><circle cx="708.7" cy="821.5" r="1.7"/><circle cx="710.8" cy="829.3" r="1.2"/><circle cx="708.1" cy="838.8" r="1.9"/><circle cx="711.3" cy="816.7" r="1"/></g><ellipse cx="893.9" cy="877.9" rx="11" ry="6.2" fill="#b9bccf"/><ellipse cx="888.6" cy="874.7" rx="11.4" ry="3.6" fill="#9c9c9c"/><path d="M876.6 761.7L876.6 873.5Q888 877.1 898.7 873.5L898.7 761.7Z" fill="#a9a9a9"/><path d="M877.8 803.8L877.8 871.9Q887.4 875 896.6 871.9L896.6 803.8Z" fill="#992a98"/><ellipse cx="887.1" cy="804.3" rx="9.4" ry="2.2" fill="#b35ab5"/><ellipse cx="888.6" cy="760.5" rx="13.4" ry="4.8" fill="#d6d6d6"/><g stroke="#e6c6e8" stroke-width="1" stroke-linecap="round"><path d="M877.4 808.7L883.8 810.9"/><path d="M877.4 818L883.8 820.2"/><path d="M877.4 827.3L883.8 829.5"/><path d="M877.4 836.7L883.8 838.8"/><path d="M877.4 846L883.8 848.1"/><path d="M877.4 855.3L883.8 857.5"/></g><g fill="#a44aa6"><circle cx="890.9" cy="769.5" r="1.2"/><circle cx="886.2" cy="777.9" r="1.4"/><circle cx="890.9" cy="783.2" r="1.1"/><circle cx="886.2" cy="791.6" r="1.4"/><circle cx="888.6" cy="796.6" r="1.2"/><circle cx="892.1" cy="755.8" r="1.1"/><circle cx="887" cy="760.5" r="1"/></g><g fill="#b05ab2" opacity=".8"><circle cx="889.8" cy="820.1" r="1.2"/><circle cx="886.5" cy="827.2" r="1.1"/><circle cx="889.8" cy="836.4" r="1.7"/><circle cx="886.2" cy="814.9" r="0.8"/></g><ellipse cx="804.3" cy="876.5" rx="26.9" ry="6.6" fill="#c7bfd6"/><path d="M772 803.8L774.7 807.1L774.7 874.7Q775.6 878.9 781.6 879.1L827.6 879.1Q834.2 878.9 834.8 874.7L834.8 804.8Z" fill="#a9a9a9"/><path d="M777.8 823.9L777.8 872.9Q778.2 876.5 782.8 876.9L826.8 876.9Q831.3 876.5 831.8 872.9L831.8 823.9Z" fill="#ee3a78"/><ellipse cx="804.8" cy="824.1" rx="27" ry="6" fill="#f0608f"/><path d="M771.1 803.6Q773.2 796.4 803.7 796.4Q835.4 796.6 835.1 804.4Q834.2 811.9 803.7 811.9Q775.6 811.9 774.4 807.1Z" fill="#d8d8d8"/><g stroke="#fbd3e0" stroke-width="1.2" stroke-linecap="round"><path d="M795.9 823.6Q804.3 825.6 812.7 823.6" fill="none"/><path d="M798.6 831.8Q804.3 833.7 810 831.8" fill="none"/><path d="M795.9 839.9Q804.3 841.8 812.7 839.9" fill="none"/><path d="M798.6 848Q804.3 849.9 810 848" fill="none"/><path d="M795.9 856.2Q804.3 858.1 812.7 856.2" fill="none"/><path d="M798.6 864.3Q804.3 866.2 810 864.3" fill="none"/><path d="M795.9 872.4Q804.3 874.3 812.7 872.4" fill="none"/></g><g fill="#ee6a98"><circle cx="799.5" cy="804.4" r="1.2"/><circle cx="813.9" cy="800.6" r="1.4"/><circle cx="820.4" cy="807.7" r="2.4"/><circle cx="819.8" cy="796.4" r="1.4"/></g><g fill="#f47aa3" opacity=".75"><circle cx="821.6" cy="842.4" r="3.3"/><circle cx="818" cy="850.8" r="1.4"/><circle cx="790.6" cy="859.7" r="2.4"/><circle cx="784" cy="856.2" r="1.2"/><circle cx="787.6" cy="866.9" r="1.4"/></g><ellipse cx="750.5" cy="890.2" rx="34.9" ry="10.5" fill="#bcc0d6"/><path d="M741 802.4L741 839.4L718 884.8Q715.9 892 723 895.8Q750.5 904 778 895.8Q785.2 892 783 884.8L760.7 839.4L760.7 802.4Z" fill="#a9a9a9" fill-opacity=".93"/><path d="M734 853.2L720 882.4Q718 890.2 724.8 893.4Q750.5 901 776.2 893.4Q783 890.2 781 882.4L767 853.2Z" fill="#4fcdc4"/><ellipse cx="750.5" cy="852.9" rx="16.6" ry="3.3" fill="#7eddd6"/><ellipse cx="750.5" cy="802.4" rx="11" ry="4.5" fill="#d6d6d6"/><g stroke="#e3f7f5" stroke-width="1.2" stroke-linecap="round"><path d="M745.7 848Q750.5 849.7 755.3 848" fill="none"/><path d="M743.1 855.4Q750.5 857.1 757.9 855.4" fill="none"/><path d="M745.7 862.8Q750.5 864.5 755.3 862.8" fill="none"/><path d="M743.1 870.3Q750.5 871.9 757.9 870.3" fill="none"/><path d="M745.7 877.7Q750.5 879.3 755.3 877.7" fill="none"/><path d="M743.1 885.1Q750.5 886.7 757.9 885.1" fill="none"/><path d="M745.7 892.5Q750.5 894.2 755.3 892.5" fill="none"/></g><g fill="#6ed3cc"><circle cx="754.7" cy="810.7" r="2.6"/><circle cx="754.1" cy="828.1" r="2.4"/><circle cx="746.9" cy="826.9" r="1.4"/><circle cx="747.5" cy="834.6" r="1.2"/><circle cx="752.3" cy="843.6" r="1.8"/><circle cx="746.1" cy="797.6" r="1.7"/></g><ellipse cx="856.3" cy="887.8" rx="34.7" ry="10.2" fill="#bcc0d6"/><path d="M846.1 800.2L846.1 839.4L824 882.4Q821.6 889.9 828.8 893.4Q856.3 901 883.8 893.4Q890.9 889.9 888.6 882.4L866.4 839.4L866.4 800.2Z" fill="#a9a9a9" fill-opacity=".93"/><path d="M842.3 848.7L826 880.7Q824 887.8 830.8 891Q856.3 898.2 882 891Q888.6 887.8 886.8 880.7L870.5 848.7Z" fill="#fcd600"/><ellipse cx="856.4" cy="848.5" rx="14.2" ry="3.2" fill="#fde352"/><ellipse cx="856.3" cy="800" rx="11" ry="4.5" fill="#d6d6d6"/><g stroke="#fff6c4" stroke-width="1.2" stroke-linecap="round"><path d="M851.5 851.4Q856.3 853 861.1 851.4" fill="none"/><path d="M848.9 858.8Q856.3 860.5 863.7 858.8" fill="none"/><path d="M851.5 866.2Q856.3 867.9 861.1 866.2" fill="none"/><path d="M848.9 873.6Q856.3 875.3 863.7 873.6" fill="none"/><path d="M851.5 881Q856.3 882.7 861.1 881" fill="none"/><path d="M848.9 888.4Q856.3 890.1 863.7 888.4" fill="none"/></g><g fill="#fbe04a"><circle cx="852.1" cy="808.3" r="3"/><circle cx="852.7" cy="825.7" r="2.4"/><circle cx="859.9" cy="823.9" r="1.6"/><circle cx="858.7" cy="831.6" r="1.4"/><circle cx="854.3" cy="840.6" r="1.9"/><circle cx="860.5" cy="795.2" r="1.8"/></g></g><g transform="translate(0 334)"><g transform="translate(139 799) rotate(52.5)" fill="#fff" font-family="'Liberation Sans',sans-serif"><text x="0" y="0" font-size="33" textLength="76" lengthAdjust="spacingAndGlyphs">E=MC</text><text x="78" y="-14" font-size="17">2</text></g><g transform="translate(320.9 793.5) rotate(4)"><g fill="none" stroke="#d68ccb" stroke-width="2.7"><ellipse rx="32" ry="11" transform="rotate(90)"/><ellipse rx="32" ry="11" transform="rotate(30)"/><ellipse rx="32" ry="11" transform="rotate(-30)"/></g><circle cx="0" cy="0" r="4.8" fill="#d68ccb"/><circle cx="5.5" cy="-25.5" r="2.9" fill="#d68ccb"/><circle cx="24.5" cy="7.5" r="2.9" fill="#d68ccb"/><circle cx="-5.5" cy="21" r="2.9" fill="#d68ccb"/></g><g transform="translate(479.4 838.8) rotate(15) scale(0.985)"><circle cx="0" cy="-12" r="14" fill="#6ccfcf"/><circle cx="10.4" cy="6" r="14" fill="#6ccfcf"/><circle cx="-10.4" cy="6" r="14" fill="#6ccfcf"/><circle cx="0" cy="-17.3" r="9.5" fill="#303030"/><circle cx="15" cy="8.6" r="9.5" fill="#303030"/><circle cx="-15" cy="8.6" r="9.5" fill="#303030"/><path d="M-4.2 -5.4A6.8 6.8 0 0 1 4.2 -5.4" fill="none" stroke="#303030" stroke-width="2.6"/><path d="M6.7 -0.9A6.8 6.8 0 0 1 2.5 6.3" fill="none" stroke="#303030" stroke-width="2.6"/><path d="M-2.5 6.3A6.8 6.8 0 0 1 -6.7 -0.9" fill="none" stroke="#303030" stroke-width="2.6"/><path d="M-6.6 -7.8A10.2 10.2 0 0 1 6.6 -7.8" fill="none" stroke="#303030" stroke-width="4.8"/><path d="M10 -1.8A10.2 10.2 0 0 1 3.5 9.6" fill="none" stroke="#303030" stroke-width="4.8"/><path d="M-3.5 9.6A10.2 10.2 0 0 1 -10 -1.8" fill="none" stroke="#303030" stroke-width="4.8"/><path d="M-6 -8.3A10.2 10.2 0 0 1 6 -8.3" fill="none" stroke="#6ccfcf" stroke-width="3.6"/><path d="M10.1 -1.1A10.2 10.2 0 0 1 4.1 9.3" fill="none" stroke="#6ccfcf" stroke-width="3.6"/><path d="M-4.1 9.3A10.2 10.2 0 0 1 -10.1 -1.1" fill="none" stroke="#6ccfcf" stroke-width="3.6"/><circle cx="0" cy="0" r="3.1" fill="#303030"/><path d="M0 -2L0 -8.3" stroke="#303030" stroke-width="1.4"/><path d="M1.7 1L7.2 4.1" stroke="#303030" stroke-width="1.4"/><path d="M-1.7 1L-7.2 4.1" stroke="#303030" stroke-width="1.4"/></g><polygon points="591.5,777 559.7,800 595.9,816.4" fill="#f9d616"/><path d="M588.5 785.9L577.6 795.3L585.7 796.2L580.2 802.9" fill="none" stroke="#1a1a1a" stroke-width="2.7" stroke-linejoin="miter"/><polygon points="577.8,802.5 582.2,803.8 578.4,805.4" fill="#1a1a1a"/><g stroke="#c6dc34" stroke-width="2.9" stroke-linejoin="round"><polygon points="338.4,903.5 353.9,906.9 359.3,923.7 348.5,934.5 332.4,931.1 327.7,915.6" fill="none"/><polygon points="332.4,931.1 348.5,934.5 353.2,950.6 342.5,962 326.3,958.7 322.3,942.5" fill="none"/><polygon points="322.3,942.5 326.3,958.7 316.9,970.8 301.4,967.4 296.7,951.3 307.5,939.2" fill="none"/><path d="M302.1 923L307.5 939.2"/><path d="M366 954.6L353.2 950.6"/></g><g fill="#c6dc34"><circle cx="348.5" cy="934.5" r="3.8"/><circle cx="359.3" cy="923.7" r="3.8"/><circle cx="338.4" cy="903.5" r="3.8"/><circle cx="332.4" cy="931.1" r="3.8"/><circle cx="301.4" cy="967.4" r="3.8"/><circle cx="307.5" cy="939.2" r="3.8"/><circle cx="327.7" cy="915.6" r="3.8"/><circle cx="326.3" cy="958.7" r="3.8"/><circle cx="296.7" cy="951.3" r="3.8"/><circle cx="342.5" cy="962" r="3.8"/><circle cx="322.3" cy="942.5" r="3.8"/><circle cx="353.2" cy="950.6" r="3.8"/><circle cx="353.9" cy="906.9" r="3.8"/><circle cx="316.9" cy="970.8" r="3.8"/><circle cx="302.1" cy="923" r="4.5"/><circle cx="366" cy="954.6" r="4.5"/></g><g stroke="#e29bcd" stroke-width="2.9" fill="none" transform="translate(554.5 962.5) scale(1)"><circle cx="-13.7" cy="15.8" r="8.2" fill="none"/><path d="M-27.6 -20L0 0"/><path d="M32.3 8.5L0 0"/><circle cx="0" cy="0" r="17.5" fill="#303030"/><circle cx="9.8" cy="-20.9" r="12" fill="#303030"/><circle cx="-27.6" cy="-20" r="7.9" fill="#303030"/><circle cx="32.3" cy="8.5" r="6.4" fill="#303030"/></g><g fill="none" stroke="#943a98" stroke-width="1.4" stroke-linecap="round"><path d="M162.3 967.4C163.5 969.2 167.6 974.1 169.7 978.2C171.7 982.2 172.5 987.1 174.4 991.6C176.3 996.1 178.4 1001.5 181.1 1005.1C183.8 1008.6 187.6 1011.9 190.5 1013.1C193.4 1014.4 196.1 1013.2 198.6 1012.4C201 1011.7 202.6 1010.5 205.3 1008.4C208 1006.3 211.6 1002 214.7 999.7C217.8 997.3 220.3 995.5 224.1 994.3C227.9 993.1 235.3 992.9 237.6 992.7"/><path d="M150.2 999.7C152.4 999 159.6 997.7 163.6 995.6C167.6 993.6 171 989.9 174.4 987.6C177.7 985.2 180.6 982.9 183.8 981.5C186.9 980.2 190.3 979.5 193.2 979.5C196.1 979.5 198.8 980.2 201.3 981.5C203.7 982.9 206 985 208 987.6C210 990.1 211.8 993.6 213.4 997C214.9 1000.3 216.1 1004.2 217.4 1007.7C218.7 1011.3 220 1015.5 221.4 1018.5C222.9 1021.5 225.4 1024.7 226.1 1025.9"/><path d="M169 977.1L162.3 996.7"/><path d="M185.8 981.1L180 1003"/><path d="M196.6 980.2L188.9 1012.4"/><path d="M206.9 986.9L201 1011.1"/><path d="M227.1 994L219 1012.4"/></g><g stroke="#e8527f" stroke-width="2" stroke-linejoin="round" transform="translate(454.5 1027.5) rotate(-36) scale(1)"><path d="M-15.8 -18L-15.8 2.1A15.8 15.8 0 0 0 15.8 2.1L15.8 -18L6.3 -18L6.3 2.1A6.3 6.3 0 0 1 -6.3 2.1L-6.3 -18Z" fill="none"/><rect x="-14.2" y="-16.4" width="6.3" height="5.6" fill="#1e1e1e" stroke="none"/><rect x="7.9" y="-16.4" width="6.3" height="5.6" fill="#1e1e1e" stroke="none"/><path d="M-15.8 -9.8L-6.3 -9.8"/><path d="M6.3 -9.8L15.8 -9.8"/><g fill="none" stroke-width="1.5" stroke-linecap="round"><path d="M-15.3 -20.5A5.5 5.5 0 0 1 -6.9 -20.5"/><path d="M-18 -22.8A9 9 0 0 1 -4.2 -22.8"/><path d="M6.9 -20.5A5.5 5.5 0 0 1 15.3 -20.5"/><path d="M4.2 -22.8A9 9 0 0 1 18 -22.8"/></g></g><g fill="none" stroke="#c9dc3c" stroke-width="1.5"><polygon points="1048.6,784 1067.7,792 1070.1,811.9 1054.2,824.7 1035.4,816.7 1032.7,796.8"/><polygon points="1067.7,792 1083.7,779.3 1102.8,787.2 1105.2,807.2 1089.2,819.9 1070.1,811.9"/><path d="M1048.6 784L1046.2 766.5"/><path d="M1083.7 779.3L1081.3 761.7"/><path d="M1102.8 787.2L1117.1 776.1"/><path d="M1089.2 819.9L1092.1 837.7"/><path d="M1054.2 824.7L1057.1 842.5"/><path d="M1035.4 816.7L1021.5 828.7"/><circle cx="1102.8" cy="787.2" r="2.7" fill="#303030"/><circle cx="1089.2" cy="819.9" r="2.7" fill="#303030"/><circle cx="1083.7" cy="779.3" r="2.7" fill="#303030"/><circle cx="1035.4" cy="816.7" r="2.7" fill="#303030"/><circle cx="1105.2" cy="807.2" r="2.7" fill="#303030"/><circle cx="1070.1" cy="811.9" r="2.7" fill="#303030"/><circle cx="1067.7" cy="792" r="2.7" fill="#303030"/><circle cx="1054.2" cy="824.7" r="2.7" fill="#303030"/><circle cx="1032.7" cy="796.8" r="2.7" fill="#303030"/><circle cx="1048.6" cy="784" r="2.7" fill="#303030"/></g><g stroke="#f7d417" stroke-width="3.4" fill="none" transform="translate(1267.7 804.8) scale(1)"><circle cx="-17.5" cy="12.7" r="8.8" fill="none"/><path d="M-24.7 -27.1L0 0"/><path d="M31.9 14.8L0 0"/><circle cx="0" cy="0" r="19.1" fill="#303030"/><circle cx="15.2" cy="-20.8" r="12.7" fill="#303030"/><circle cx="-24.7" cy="-27.1" r="8.3" fill="#303030"/><circle cx="31.9" cy="14.8" r="6.7" fill="#303030"/></g><g stroke="#e8538a" stroke-width="1.6" stroke-linejoin="round" transform="translate(1421.5 783.2) rotate(133) scale(1.22)"><path d="M-15.8 -18L-15.8 2.1A15.8 15.8 0 0 0 15.8 2.1L15.8 -18L6.3 -18L6.3 2.1A6.3 6.3 0 0 1 -6.3 2.1L-6.3 -18Z" fill="none"/><rect x="-14.2" y="-16.4" width="6.3" height="5.6" fill="#1e1e1e" stroke="none"/><rect x="7.9" y="-16.4" width="6.3" height="5.6" fill="#1e1e1e" stroke="none"/><path d="M-15.8 -9.8L-6.3 -9.8"/><path d="M6.3 -9.8L15.8 -9.8"/><g fill="none" stroke-width="1.2" stroke-linecap="round"><path d="M-15.3 -20.5A5.5 5.5 0 0 1 -6.9 -20.5"/><path d="M-18 -22.8A9 9 0 0 1 -4.2 -22.8"/><path d="M6.9 -20.5A5.5 5.5 0 0 1 15.3 -20.5"/><path d="M4.2 -22.8A9 9 0 0 1 18 -22.8"/></g></g><g fill="none" stroke="#a03aa3" stroke-width="1.4" stroke-linecap="round"><path d="M1014.3 956.2C1014.8 954.8 1017.1 950.9 1017.3 948.1C1017.5 945.2 1016.3 941.9 1015.6 939.2C1014.9 936.5 1013.6 934.8 1012.9 931.8C1012.2 928.7 1010.8 924.3 1011.2 920.9C1011.6 917.5 1013.1 913.7 1015.3 911.4C1017.4 909.2 1020.6 907.8 1024.1 907.3C1027.5 906.9 1032 908.2 1036 908.7C1039.9 909.2 1044 910.8 1047.8 910.4C1051.6 910 1056.9 907 1058.7 906.3"/><path d="M991.5 936.2C992.8 935.6 996.4 933.4 999 932.8C1001.6 932.2 1004.5 932.2 1007.1 932.5C1009.7 932.7 1011.8 933.6 1014.6 934.1C1017.4 934.7 1020.9 936 1024.1 935.8C1027.3 935.7 1031.2 935.1 1033.6 933.1C1036 931.2 1038 927.5 1038.7 924.3C1039.4 921.1 1038.3 917.2 1037.7 914.1C1037 911.1 1035.6 908.8 1034.9 906C1034.3 903.2 1033.7 899.7 1033.6 897.2C1033.5 894.7 1033.8 892.7 1034.3 891.1C1034.7 889.4 1036 888 1036.3 887.3"/><path d="M1001 933.5L1016.6 947.4"/><path d="M1011.9 921.6L1026.8 934.8"/><path d="M1014.6 912.1L1035.6 930.4"/><path d="M1021.4 908L1038.3 921.6"/><path d="M1034.9 896.5L1049.2 909.7"/></g><g fill="none" stroke="#66c9c0" stroke-width="1.5" stroke-linejoin="round"><polygon points="1164.2,861.9 1173.2,859 1174.5,861.9 1165.5,864.8"/><polygon points="1167.4,864.3 1172.7,862.6 1176.4,872.2 1171.2,874.2"/><polygon points="1168.4,876.7 1179,873.2 1188.6,900.3 1177.7,903.8"/><polygon points="1181.2,903.5 1186.1,901.9 1188,908 1183.2,909.6"/><path d="M1165 888.7A19.7 19.7 0 1 0 1191.5 917.8"/><path d="M1165.8 893.8A14.3 14.3 0 1 0 1185.9 916.5"/><circle cx="1172.5" cy="888" r="7.7" fill="#303030"/><circle cx="1172.5" cy="888" r="4.4"/><polygon points="1173.6,911.1 1200.1,915.7 1199.1,919.6 1174.3,914.6" fill="#303030"/><path d="M1165.5 924.7L1164.2 930.5"/><path d="M1176.7 927L1175.4 932.8"/><polygon points="1154.5,929.3 1185.7,935.7 1184.8,939.9 1153.5,933.4"/></g><text transform="translate(1330.5 917) rotate(9)" fill="#fff" font-family="'Liberation Sans',sans-serif" font-size="31">a<tspan dy="-13" font-size="17">2</tspan><tspan dy="13">+b</tspan><tspan dy="-13" font-size="17">2</tspan><tspan dy="13" font-size="25">=</tspan><tspan>c</tspan><tspan dy="-13" font-size="17">2</tspan></text><g transform="translate(1074.3 1019) rotate(4)"><g fill="none" stroke="#c6dc34" stroke-width="2.1"><ellipse rx="21.8" ry="7.5" transform="rotate(90)"/><ellipse rx="21.8" ry="7.5" transform="rotate(30)"/><ellipse rx="21.8" ry="7.5" transform="rotate(-30)"/></g><circle cx="0" cy="0" r="3.3" fill="#c6dc34"/><circle cx="3.7" cy="-17.4" r="2" fill="#c6dc34"/><circle cx="16.7" cy="5.1" r="2" fill="#c6dc34"/><circle cx="-3.7" cy="14.3" r="2" fill="#c6dc34"/></g><g transform="translate(1261.3 1006.4) rotate(3) scale(1.26)"><circle cx="0" cy="-12" r="14" fill="#de8fd0"/><circle cx="10.4" cy="6" r="14" fill="#de8fd0"/><circle cx="-10.4" cy="6" r="14" fill="#de8fd0"/><circle cx="0" cy="-17.3" r="9.5" fill="#303030"/><circle cx="15" cy="8.6" r="9.5" fill="#303030"/><circle cx="-15" cy="8.6" r="9.5" fill="#303030"/><path d="M-4.2 -5.4A6.8 6.8 0 0 1 4.2 -5.4" fill="none" stroke="#303030" stroke-width="2.6"/><path d="M6.7 -0.9A6.8 6.8 0 0 1 2.5 6.3" fill="none" stroke="#303030" stroke-width="2.6"/><path d="M-2.5 6.3A6.8 6.8 0 0 1 -6.7 -0.9" fill="none" stroke="#303030" stroke-width="2.6"/><path d="M-6.6 -7.8A10.2 10.2 0 0 1 6.6 -7.8" fill="none" stroke="#303030" stroke-width="4.8"/><path d="M10 -1.8A10.2 10.2 0 0 1 3.5 9.6" fill="none" stroke="#303030" stroke-width="4.8"/><path d="M-3.5 9.6A10.2 10.2 0 0 1 -10 -1.8" fill="none" stroke="#303030" stroke-width="4.8"/><path d="M-6 -8.3A10.2 10.2 0 0 1 6 -8.3" fill="none" stroke="#de8fd0" stroke-width="3.6"/><path d="M10.1 -1.1A10.2 10.2 0 0 1 4.1 9.3" fill="none" stroke="#de8fd0" stroke-width="3.6"/><path d="M-4.1 9.3A10.2 10.2 0 0 1 -10.1 -1.1" fill="none" stroke="#de8fd0" stroke-width="3.6"/><circle cx="0" cy="0" r="3.1" fill="#303030"/><path d="M0 -2L0 -8.3" stroke="#303030" stroke-width="1.4"/><path d="M1.7 1L7.2 4.1" stroke="#303030" stroke-width="1.4"/><path d="M-1.7 1L-7.2 4.1" stroke="#303030" stroke-width="1.4"/></g><g transform="translate(1401.3 1017.9) rotate(10)"><circle cx="0" cy="0" r="17.7" fill="none" stroke="#f7d417" stroke-width="1.8"/><path d="M-5.3 0L-15.2 0A15.2 15.2 0 0 1 -7.6 -13.2L-2.6 -4.6A5.3 5.3 0 0 0 -5.3 0Z" fill="#f7d417"/><path d="M2.7 -4.6L7.6 -13.2A15.2 15.2 0 0 1 15.2 0L5.3 0A5.3 5.3 0 0 0 2.7 -4.6Z" fill="#f7d417"/><path d="M2.7 4.6L7.6 13.2A15.2 15.2 0 0 1 -7.6 13.2L-2.6 4.6A5.3 5.3 0 0 0 2.7 4.6Z" fill="#f7d417"/><circle cx="0" cy="0" r="3.5" fill="#f7d417"/></g><ellipse cx="710.5" cy="880.1" rx="17.9" ry="6.2" fill="#b9bccf"/><ellipse cx="710.5" cy="877.9" rx="15.3" ry="4.8" fill="#9c9c9c"/><path d="M699.1 764.1L699.1 875.3Q710.5 879.5 721.8 875.3L721.8 764.1Z" fill="#a9a9a9"/><path d="M702.1 799.4L702.1 873.5Q711.1 876.2 720.4 873.5L720.4 799.4Z" fill="#c3d82e"/><ellipse cx="711.2" cy="799.6" rx="9.2" ry="2" fill="#d0e045"/><ellipse cx="709.3" cy="762.9" rx="13.4" ry="4.8" fill="#d6d6d6"/><g stroke="#e8f0b0" stroke-width="1" stroke-linecap="round"><path d="M714.9 804.5L721.2 802.1"/><path d="M714.9 813.6L721.2 811.2"/><path d="M714.9 822.7L721.2 820.3"/><path d="M714.9 831.8L721.2 829.4"/><path d="M714.9 840.9L721.2 838.5"/><path d="M714.9 849.9L721.2 847.5"/><path d="M714.9 859L721.2 856.6"/><path d="M714.9 868.1L721.2 865.7"/></g><g fill="#cfe04a"><circle cx="706.9" cy="772.2" r="1.4"/><circle cx="711.7" cy="776.7" r="1.6"/><circle cx="706.9" cy="781.5" r="1.2"/><circle cx="711.7" cy="784.1" r="1.7"/><circle cx="709.9" cy="794.6" r="1.2"/><circle cx="705.7" cy="757.5" r="1.6"/><circle cx="710.5" cy="762.9" r="1.1"/></g><g fill="#d3e35a" opacity=".7"><circle cx="708.7" cy="821.5" r="1.7"/><circle cx="710.8" cy="829.3" r="1.2"/><circle cx="708.1" cy="838.8" r="1.9"/><circle cx="711.3" cy="816.7" r="1"/></g><ellipse cx="893.9" cy="877.9" rx="11" ry="6.2" fill="#b9bccf"/><ellipse cx="888.6" cy="874.7" rx="11.4" ry="3.6" fill="#9c9c9c"/><path d="M876.6 761.7L876.6 873.5Q888 877.1 898.7 873.5L898.7 761.7Z" fill="#a9a9a9"/><path d="M877.8 803.8L877.8 871.9Q887.4 875 896.6 871.9L896.6 803.8Z" fill="#992a98"/><ellipse cx="887.1" cy="804.3" rx="9.4" ry="2.2" fill="#b35ab5"/><ellipse cx="888.6" cy="760.5" rx="13.4" ry="4.8" fill="#d6d6d6"/><g stroke="#e6c6e8" stroke-width="1" stroke-linecap="round"><path d="M877.4 808.7L883.8 810.9"/><path d="M877.4 818L883.8 820.2"/><path d="M877.4 827.3L883.8 829.5"/><path d="M877.4 836.7L883.8 838.8"/><path d="M877.4 846L883.8 848.1"/><path d="M877.4 855.3L883.8 857.5"/></g><g fill="#a44aa6"><circle cx="890.9" cy="769.5" r="1.2"/><circle cx="886.2" cy="777.9" r="1.4"/><circle cx="890.9" cy="783.2" r="1.1"/><circle cx="886.2" cy="791.6" r="1.4"/><circle cx="888.6" cy="796.6" r="1.2"/><circle cx="892.1" cy="755.8" r="1.1"/><circle cx="887" cy="760.5" r="1"/></g><g fill="#b05ab2" opacity=".8"><circle cx="889.8" cy="820.1" r="1.2"/><circle cx="886.5" cy="827.2" r="1.1"/><circle cx="889.8" cy="836.4" r="1.7"/><circle cx="886.2" cy="814.9" r="0.8"/></g><ellipse cx="804.3" cy="876.5" rx="26.9" ry="6.6" fill="#c7bfd6"/><path d="M772 803.8L774.7 807.1L774.7 874.7Q775.6 878.9 781.6 879.1L827.6 879.1Q834.2 878.9 834.8 874.7L834.8 804.8Z" fill="#a9a9a9"/><path d="M777.8 823.9L777.8 872.9Q778.2 876.5 782.8 876.9L826.8 876.9Q831.3 876.5 831.8 872.9L831.8 823.9Z" fill="#ee3a78"/><ellipse cx="804.8" cy="824.1" rx="27" ry="6" fill="#f0608f"/><path d="M771.1 803.6Q773.2 796.4 803.7 796.4Q835.4 796.6 835.1 804.4Q834.2 811.9 803.7 811.9Q775.6 811.9 774.4 807.1Z" fill="#d8d8d8"/><g stroke="#fbd3e0" stroke-width="1.2" stroke-linecap="round"><path d="M795.9 823.6Q804.3 825.6 812.7 823.6" fill="none"/><path d="M798.6 831.8Q804.3 833.7 810 831.8" fill="none"/><path d="M795.9 839.9Q804.3 841.8 812.7 839.9" fill="none"/><path d="M798.6 848Q804.3 849.9 810 848" fill="none"/><path d="M795.9 856.2Q804.3 858.1 812.7 856.2" fill="none"/><path d="M798.6 864.3Q804.3 866.2 810 864.3" fill="none"/><path d="M795.9 872.4Q804.3 874.3 812.7 872.4" fill="none"/></g><g fill="#ee6a98"><circle cx="799.5" cy="804.4" r="1.2"/><circle cx="813.9" cy="800.6" r="1.4"/><circle cx="820.4" cy="807.7" r="2.4"/><circle cx="819.8" cy="796.4" r="1.4"/></g><g fill="#f47aa3" opacity=".75"><circle cx="821.6" cy="842.4" r="3.3"/><circle cx="818" cy="850.8" r="1.4"/><circle cx="790.6" cy="859.7" r="2.4"/><circle cx="784" cy="856.2" r="1.2"/><circle cx="787.6" cy="866.9" r="1.4"/></g><ellipse cx="750.5" cy="890.2" rx="34.9" ry="10.5" fill="#bcc0d6"/><path d="M741 802.4L741 839.4L718 884.8Q715.9 892 723 895.8Q750.5 904 778 895.8Q785.2 892 783 884.8L760.7 839.4L760.7 802.4Z" fill="#a9a9a9" fill-opacity=".93"/><path d="M734 853.2L720 882.4Q718 890.2 724.8 893.4Q750.5 901 776.2 893.4Q783 890.2 781 882.4L767 853.2Z" fill="#4fcdc4"/><ellipse cx="750.5" cy="852.9" rx="16.6" ry="3.3" fill="#7eddd6"/><ellipse cx="750.5" cy="802.4" rx="11" ry="4.5" fill="#d6d6d6"/><g stroke="#e3f7f5" stroke-width="1.2" stroke-linecap="round"><path d="M745.7 848Q750.5 849.7 755.3 848" fill="none"/><path d="M743.1 855.4Q750.5 857.1 757.9 855.4" fill="none"/><path d="M745.7 862.8Q750.5 864.5 755.3 862.8" fill="none"/><path d="M743.1 870.3Q750.5 871.9 757.9 870.3" fill="none"/><path d="M745.7 877.7Q750.5 879.3 755.3 877.7" fill="none"/><path d="M743.1 885.1Q750.5 886.7 757.9 885.1" fill="none"/><path d="M745.7 892.5Q750.5 894.2 755.3 892.5" fill="none"/></g><g fill="#6ed3cc"><circle cx="754.7" cy="810.7" r="2.6"/><circle cx="754.1" cy="828.1" r="2.4"/><circle cx="746.9" cy="826.9" r="1.4"/><circle cx="747.5" cy="834.6" r="1.2"/><circle cx="752.3" cy="843.6" r="1.8"/><circle cx="746.1" cy="797.6" r="1.7"/></g><ellipse cx="856.3" cy="887.8" rx="34.7" ry="10.2" fill="#bcc0d6"/><path d="M846.1 800.2L846.1 839.4L824 882.4Q821.6 889.9 828.8 893.4Q856.3 901 883.8 893.4Q890.9 889.9 888.6 882.4L866.4 839.4L866.4 800.2Z" fill="#a9a9a9" fill-opacity=".93"/><path d="M842.3 848.7L826 880.7Q824 887.8 830.8 891Q856.3 898.2 882 891Q888.6 887.8 886.8 880.7L870.5 848.7Z" fill="#fcd600"/><ellipse cx="856.4" cy="848.5" rx="14.2" ry="3.2" fill="#fde352"/><ellipse cx="856.3" cy="800" rx="11" ry="4.5" fill="#d6d6d6"/><g stroke="#fff6c4" stroke-width="1.2" stroke-linecap="round"><path d="M851.5 851.4Q856.3 853 861.1 851.4" fill="none"/><path d="M848.9 858.8Q856.3 860.5 863.7 858.8" fill="none"/><path d="M851.5 866.2Q856.3 867.9 861.1 866.2" fill="none"/><path d="M848.9 873.6Q856.3 875.3 863.7 873.6" fill="none"/><path d="M851.5 881Q856.3 882.7 861.1 881" fill="none"/><path d="M848.9 888.4Q856.3 890.1 863.7 888.4" fill="none"/></g><g fill="#fbe04a"><circle cx="852.1" cy="808.3" r="3"/><circle cx="852.7" cy="825.7" r="2.4"/><circle cx="859.9" cy="823.9" r="1.6"/><circle cx="858.7" cy="831.6" r="1.4"/><circle cx="854.3" cy="840.6" r="1.9"/><circle cx="860.5" cy="795.2" r="1.8"/></g></g><g transform="translate(0 668)"><g transform="translate(139 799) rotate(52.5)" fill="#fff" font-family="'Liberation Sans',sans-serif"><text x="0" y="0" font-size="33" textLength="76" lengthAdjust="spacingAndGlyphs">E=MC</text><text x="78" y="-14" font-size="17">2</text></g><g transform="translate(320.9 793.5) rotate(4)"><g fill="none" stroke="#d68ccb" stroke-width="2.7"><ellipse rx="32" ry="11" transform="rotate(90)"/><ellipse rx="32" ry="11" transform="rotate(30)"/><ellipse rx="32" ry="11" transform="rotate(-30)"/></g><circle cx="0" cy="0" r="4.8" fill="#d68ccb"/><circle cx="5.5" cy="-25.5" r="2.9" fill="#d68ccb"/><circle cx="24.5" cy="7.5" r="2.9" fill="#d68ccb"/><circle cx="-5.5" cy="21" r="2.9" fill="#d68ccb"/></g><g transform="translate(479.4 838.8) rotate(15) scale(0.985)"><circle cx="0" cy="-12" r="14" fill="#6ccfcf"/><circle cx="10.4" cy="6" r="14" fill="#6ccfcf"/><circle cx="-10.4" cy="6" r="14" fill="#6ccfcf"/><circle cx="0" cy="-17.3" r="9.5" fill="#303030"/><circle cx="15" cy="8.6" r="9.5" fill="#303030"/><circle cx="-15" cy="8.6" r="9.5" fill="#303030"/><path d="M-4.2 -5.4A6.8 6.8 0 0 1 4.2 -5.4" fill="none" stroke="#303030" stroke-width="2.6"/><path d="M6.7 -0.9A6.8 6.8 0 0 1 2.5 6.3" fill="none" stroke="#303030" stroke-width="2.6"/><path d="M-2.5 6.3A6.8 6.8 0 0 1 -6.7 -0.9" fill="none" stroke="#303030" stroke-width="2.6"/><path d="M-6.6 -7.8A10.2 10.2 0 0 1 6.6 -7.8" fill="none" stroke="#303030" stroke-width="4.8"/><path d="M10 -1.8A10.2 10.2 0 0 1 3.5 9.6" fill="none" stroke="#303030" stroke-width="4.8"/><path d="M-3.5 9.6A10.2 10.2 0 0 1 -10 -1.8" fill="none" stroke="#303030" stroke-width="4.8"/><path d="M-6 -8.3A10.2 10.2 0 0 1 6 -8.3" fill="none" stroke="#6ccfcf" stroke-width="3.6"/><path d="M10.1 -1.1A10.2 10.2 0 0 1 4.1 9.3" fill="none" stroke="#6ccfcf" stroke-width="3.6"/><path d="M-4.1 9.3A10.2 10.2 0 0 1 -10.1 -1.1" fill="none" stroke="#6ccfcf" stroke-width="3.6"/><circle cx="0" cy="0" r="3.1" fill="#303030"/><path d="M0 -2L0 -8.3" stroke="#303030" stroke-width="1.4"/><path d="M1.7 1L7.2 4.1" stroke="#303030" stroke-width="1.4"/><path d="M-1.7 1L-7.2 4.1" stroke="#303030" stroke-width="1.4"/></g><polygon points="591.5,777 559.7,800 595.9,816.4" fill="#f9d616"/><path d="M588.5 785.9L577.6 795.3L585.7 796.2L580.2 802.9" fill="none" stroke="#1a1a1a" stroke-width="2.7" stroke-linejoin="miter"/><polygon points="577.8,802.5 582.2,803.8 578.4,805.4" fill="#1a1a1a"/><g stroke="#c6dc34" stroke-width="2.9" stroke-linejoin="round"><polygon points="338.4,903.5 353.9,906.9 359.3,923.7 348.5,934.5 332.4,931.1 327.7,915.6" fill="none"/><polygon points="332.4,931.1 348.5,934.5 353.2,950.6 342.5,962 326.3,958.7 322.3,942.5" fill="none"/><polygon points="322.3,942.5 326.3,958.7 316.9,970.8 301.4,967.4 296.7,951.3 307.5,939.2" fill="none"/><path d="M302.1 923L307.5 939.2"/><path d="M366 954.6L353.2 950.6"/></g><g fill="#c6dc34"><circle cx="348.5" cy="934.5" r="3.8"/><circle cx="359.3" cy="923.7" r="3.8"/><circle cx="338.4" cy="903.5" r="3.8"/><circle cx="332.4" cy="931.1" r="3.8"/><circle cx="301.4" cy="967.4" r="3.8"/><circle cx="307.5" cy="939.2" r="3.8"/><circle cx="327.7" cy="915.6" r="3.8"/><circle cx="326.3" cy="958.7" r="3.8"/><circle cx="296.7" cy="951.3" r="3.8"/><circle cx="342.5" cy="962" r="3.8"/><circle cx="322.3" cy="942.5" r="3.8"/><circle cx="353.2" cy="950.6" r="3.8"/><circle cx="353.9" cy="906.9" r="3.8"/><circle cx="316.9" cy="970.8" r="3.8"/><circle cx="302.1" cy="923" r="4.5"/><circle cx="366" cy="954.6" r="4.5"/></g><g stroke="#e29bcd" stroke-width="2.9" fill="none" transform="translate(554.5 962.5) scale(1)"><circle cx="-13.7" cy="15.8" r="8.2" fill="none"/><path d="M-27.6 -20L0 0"/><path d="M32.3 8.5L0 0"/><circle cx="0" cy="0" r="17.5" fill="#303030"/><circle cx="9.8" cy="-20.9" r="12" fill="#303030"/><circle cx="-27.6" cy="-20" r="7.9" fill="#303030"/><circle cx="32.3" cy="8.5" r="6.4" fill="#303030"/></g><g fill="none" stroke="#943a98" stroke-width="1.4" stroke-linecap="round"><path d="M162.3 967.4C163.5 969.2 167.6 974.1 169.7 978.2C171.7 982.2 172.5 987.1 174.4 991.6C176.3 996.1 178.4 1001.5 181.1 1005.1C183.8 1008.6 187.6 1011.9 190.5 1013.1C193.4 1014.4 196.1 1013.2 198.6 1012.4C201 1011.7 202.6 1010.5 205.3 1008.4C208 1006.3 211.6 1002 214.7 999.7C217.8 997.3 220.3 995.5 224.1 994.3C227.9 993.1 235.3 992.9 237.6 992.7"/><path d="M150.2 999.7C152.4 999 159.6 997.7 163.6 995.6C167.6 993.6 171 989.9 174.4 987.6C177.7 985.2 180.6 982.9 183.8 981.5C186.9 980.2 190.3 979.5 193.2 979.5C196.1 979.5 198.8 980.2 201.3 981.5C203.7 982.9 206 985 208 987.6C210 990.1 211.8 993.6 213.4 997C214.9 1000.3 216.1 1004.2 217.4 1007.7C218.7 1011.3 220 1015.5 221.4 1018.5C222.9 1021.5 225.4 1024.7 226.1 1025.9"/><path d="M169 977.1L162.3 996.7"/><path d="M185.8 981.1L180 1003"/><path d="M196.6 980.2L188.9 1012.4"/><path d="M206.9 986.9L201 1011.1"/><path d="M227.1 994L219 1012.4"/></g><g stroke="#e8527f" stroke-width="2" stroke-linejoin="round" transform="translate(454.5 1027.5) rotate(-36) scale(1)"><path d="M-15.8 -18L-15.8 2.1A15.8 15.8 0 0 0 15.8 2.1L15.8 -18L6.3 -18L6.3 2.1A6.3 6.3 0 0 1 -6.3 2.1L-6.3 -18Z" fill="none"/><rect x="-14.2" y="-16.4" width="6.3" height="5.6" fill="#1e1e1e" stroke="none"/><rect x="7.9" y="-16.4" width="6.3" height="5.6" fill="#1e1e1e" stroke="none"/><path d="M-15.8 -9.8L-6.3 -9.8"/><path d="M6.3 -9.8L15.8 -9.8"/><g fill="none" stroke-width="1.5" stroke-linecap="round"><path d="M-15.3 -20.5A5.5 5.5 0 0 1 -6.9 -20.5"/><path d="M-18 -22.8A9 9 0 0 1 -4.2 -22.8"/><path d="M6.9 -20.5A5.5 5.5 0 0 1 15.3 -20.5"/><path d="M4.2 -22.8A9 9 0 0 1 18 -22.8"/></g></g><g fill="none" stroke="#c9dc3c" stroke-width="1.5"><polygon points="1048.6,784 1067.7,792 1070.1,811.9 1054.2,824.7 1035.4,816.7 1032.7,796.8"/><polygon points="1067.7,792 1083.7,779.3 1102.8,787.2 1105.2,807.2 1089.2,819.9 1070.1,811.9"/><path d="M1048.6 784L1046.2 766.5"/><path d="M1083.7 779.3L1081.3 761.7"/><path d="M1102.8 787.2L1117.1 776.1"/><path d="M1089.2 819.9L1092.1 837.7"/><path d="M1054.2 824.7L1057.1 842.5"/><path d="M1035.4 816.7L1021.5 828.7"/><circle cx="1102.8" cy="787.2" r="2.7" fill="#303030"/><circle cx="1089.2" cy="819.9" r="2.7" fill="#303030"/><circle cx="1083.7" cy="779.3" r="2.7" fill="#303030"/><circle cx="1035.4" cy="816.7" r="2.7" fill="#303030"/><circle cx="1105.2" cy="807.2" r="2.7" fill="#303030"/><circle cx="1070.1" cy="811.9" r="2.7" fill="#303030"/><circle cx="1067.7" cy="792" r="2.7" fill="#303030"/><circle cx="1054.2" cy="824.7" r="2.7" fill="#303030"/><circle cx="1032.7" cy="796.8" r="2.7" fill="#303030"/><circle cx="1048.6" cy="784" r="2.7" fill="#303030"/></g><g stroke="#f7d417" stroke-width="3.4" fill="none" transform="translate(1267.7 804.8) scale(1)"><circle cx="-17.5" cy="12.7" r="8.8" fill="none"/><path d="M-24.7 -27.1L0 0"/><path d="M31.9 14.8L0 0"/><circle cx="0" cy="0" r="19.1" fill="#303030"/><circle cx="15.2" cy="-20.8" r="12.7" fill="#303030"/><circle cx="-24.7" cy="-27.1" r="8.3" fill="#303030"/><circle cx="31.9" cy="14.8" r="6.7" fill="#303030"/></g><g stroke="#e8538a" stroke-width="1.6" stroke-linejoin="round" transform="translate(1421.5 783.2) rotate(133) scale(1.22)"><path d="M-15.8 -18L-15.8 2.1A15.8 15.8 0 0 0 15.8 2.1L15.8 -18L6.3 -18L6.3 2.1A6.3 6.3 0 0 1 -6.3 2.1L-6.3 -18Z" fill="none"/><rect x="-14.2" y="-16.4" width="6.3" height="5.6" fill="#1e1e1e" stroke="none"/><rect x="7.9" y="-16.4" width="6.3" height="5.6" fill="#1e1e1e" stroke="none"/><path d="M-15.8 -9.8L-6.3 -9.8"/><path d="M6.3 -9.8L15.8 -9.8"/><g fill="none" stroke-width="1.2" stroke-linecap="round"><path d="M-15.3 -20.5A5.5 5.5 0 0 1 -6.9 -20.5"/><path d="M-18 -22.8A9 9 0 0 1 -4.2 -22.8"/><path d="M6.9 -20.5A5.5 5.5 0 0 1 15.3 -20.5"/><path d="M4.2 -22.8A9 9 0 0 1 18 -22.8"/></g></g><g fill="none" stroke="#a03aa3" stroke-width="1.4" stroke-linecap="round"><path d="M1014.3 956.2C1014.8 954.8 1017.1 950.9 1017.3 948.1C1017.5 945.2 1016.3 941.9 1015.6 939.2C1014.9 936.5 1013.6 934.8 1012.9 931.8C1012.2 928.7 1010.8 924.3 1011.2 920.9C1011.6 917.5 1013.1 913.7 1015.3 911.4C1017.4 909.2 1020.6 907.8 1024.1 907.3C1027.5 906.9 1032 908.2 1036 908.7C1039.9 909.2 1044 910.8 1047.8 910.4C1051.6 910 1056.9 907 1058.7 906.3"/><path d="M991.5 936.2C992.8 935.6 996.4 933.4 999 932.8C1001.6 932.2 1004.5 932.2 1007.1 932.5C1009.7 932.7 1011.8 933.6 1014.6 934.1C1017.4 934.7 1020.9 936 1024.1 935.8C1027.3 935.7 1031.2 935.1 1033.6 933.1C1036 931.2 1038 927.5 1038.7 924.3C1039.4 921.1 1038.3 917.2 1037.7 914.1C1037 911.1 1035.6 908.8 1034.9 906C1034.3 903.2 1033.7 899.7 1033.6 897.2C1033.5 894.7 1033.8 892.7 1034.3 891.1C1034.7 889.4 1036 888 1036.3 887.3"/><path d="M1001 933.5L1016.6 947.4"/><path d="M1011.9 921.6L1026.8 934.8"/><path d="M1014.6 912.1L1035.6 930.4"/><path d="M1021.4 908L1038.3 921.6"/><path d="M1034.9 896.5L1049.2 909.7"/></g><g fill="none" stroke="#66c9c0" stroke-width="1.5" stroke-linejoin="round"><polygon points="1164.2,861.9 1173.2,859 1174.5,861.9 1165.5,864.8"/><polygon points="1167.4,864.3 1172.7,862.6 1176.4,872.2 1171.2,874.2"/><polygon points="1168.4,876.7 1179,873.2 1188.6,900.3 1177.7,903.8"/><polygon points="1181.2,903.5 1186.1,901.9 1188,908 1183.2,909.6"/><path d="M1165 888.7A19.7 19.7 0 1 0 1191.5 917.8"/><path d="M1165.8 893.8A14.3 14.3 0 1 0 1185.9 916.5"/><circle cx="1172.5" cy="888" r="7.7" fill="#303030"/><circle cx="1172.5" cy="888" r="4.4"/><polygon points="1173.6,911.1 1200.1,915.7 1199.1,919.6 1174.3,914.6" fill="#303030"/><path d="M1165.5 924.7L1164.2 930.5"/><path d="M1176.7 927L1175.4 932.8"/><polygon points="1154.5,929.3 1185.7,935.7 1184.8,939.9 1153.5,933.4"/></g><text transform="translate(1330.5 917) rotate(9)" fill="#fff" font-family="'Liberation Sans',sans-serif" font-size="31">a<tspan dy="-13" font-size="17">2</tspan><tspan dy="13">+b</tspan><tspan dy="-13" font-size="17">2</tspan><tspan dy="13" font-size="25">=</tspan><tspan>c</tspan><tspan dy="-13" font-size="17">2</tspan></text><g transform="translate(1074.3 1019) rotate(4)"><g fill="none" stroke="#c6dc34" stroke-width="2.1"><ellipse rx="21.8" ry="7.5" transform="rotate(90)"/><ellipse rx="21.8" ry="7.5" transform="rotate(30)"/><ellipse rx="21.8" ry="7.5" transform="rotate(-30)"/></g><circle cx="0" cy="0" r="3.3" fill="#c6dc34"/><circle cx="3.7" cy="-17.4" r="2" fill="#c6dc34"/><circle cx="16.7" cy="5.1" r="2" fill="#c6dc34"/><circle cx="-3.7" cy="14.3" r="2" fill="#c6dc34"/></g><g transform="translate(1261.3 1006.4) rotate(3) scale(1.26)"><circle cx="0" cy="-12" r="14" fill="#de8fd0"/><circle cx="10.4" cy="6" r="14" fill="#de8fd0"/><circle cx="-10.4" cy="6" r="14" fill="#de8fd0"/><circle cx="0" cy="-17.3" r="9.5" fill="#303030"/><circle cx="15" cy="8.6" r="9.5" fill="#303030"/><circle cx="-15" cy="8.6" r="9.5" fill="#303030"/><path d="M-4.2 -5.4A6.8 6.8 0 0 1 4.2 -5.4" fill="none" stroke="#303030" stroke-width="2.6"/><path d="M6.7 -0.9A6.8 6.8 0 0 1 2.5 6.3" fill="none" stroke="#303030" stroke-width="2.6"/><path d="M-2.5 6.3A6.8 6.8 0 0 1 -6.7 -0.9" fill="none" stroke="#303030" stroke-width="2.6"/><path d="M-6.6 -7.8A10.2 10.2 0 0 1 6.6 -7.8" fill="none" stroke="#303030" stroke-width="4.8"/><path d="M10 -1.8A10.2 10.2 0 0 1 3.5 9.6" fill="none" stroke="#303030" stroke-width="4.8"/><path d="M-3.5 9.6A10.2 10.2 0 0 1 -10 -1.8" fill="none" stroke="#303030" stroke-width="4.8"/><path d="M-6 -8.3A10.2 10.2 0 0 1 6 -8.3" fill="none" stroke="#de8fd0" stroke-width="3.6"/><path d="M10.1 -1.1A10.2 10.2 0 0 1 4.1 9.3" fill="none" stroke="#de8fd0" stroke-width="3.6"/><path d="M-4.1 9.3A10.2 10.2 0 0 1 -10.1 -1.1" fill="none" stroke="#de8fd0" stroke-width="3.6"/><circle cx="0" cy="0" r="3.1" fill="#303030"/><path d="M0 -2L0 -8.3" stroke="#303030" stroke-width="1.4"/><path d="M1.7 1L7.2 4.1" stroke="#303030" stroke-width="1.4"/><path d="M-1.7 1L-7.2 4.1" stroke="#303030" stroke-width="1.4"/></g><g transform="translate(1401.3 1017.9) rotate(10)"><circle cx="0" cy="0" r="17.7" fill="none" stroke="#f7d417" stroke-width="1.8"/><path d="M-5.3 0L-15.2 0A15.2 15.2 0 0 1 -7.6 -13.2L-2.6 -4.6A5.3 5.3 0 0 0 -5.3 0Z" fill="#f7d417"/><path d="M2.7 -4.6L7.6 -13.2A15.2 15.2 0 0 1 15.2 0L5.3 0A5.3 5.3 0 0 0 2.7 -4.6Z" fill="#f7d417"/><path d="M2.7 4.6L7.6 13.2A15.2 15.2 0 0 1 -7.6 13.2L-2.6 4.6A5.3 5.3 0 0 0 2.7 4.6Z" fill="#f7d417"/><circle cx="0" cy="0" r="3.5" fill="#f7d417"/></g><ellipse cx="710.5" cy="880.1" rx="17.9" ry="6.2" fill="#b9bccf"/><ellipse cx="710.5" cy="877.9" rx="15.3" ry="4.8" fill="#9c9c9c"/><path d="M699.1 764.1L699.1 875.3Q710.5 879.5 721.8 875.3L721.8 764.1Z" fill="#a9a9a9"/><path d="M702.1 799.4L702.1 873.5Q711.1 876.2 720.4 873.5L720.4 799.4Z" fill="#c3d82e"/><ellipse cx="711.2" cy="799.6" rx="9.2" ry="2" fill="#d0e045"/><ellipse cx="709.3" cy="762.9" rx="13.4" ry="4.8" fill="#d6d6d6"/><g stroke="#e8f0b0" stroke-width="1" stroke-linecap="round"><path d="M714.9 804.5L721.2 802.1"/><path d="M714.9 813.6L721.2 811.2"/><path d="M714.9 822.7L721.2 820.3"/><path d="M714.9 831.8L721.2 829.4"/><path d="M714.9 840.9L721.2 838.5"/><path d="M714.9 849.9L721.2 847.5"/><path d="M714.9 859L721.2 856.6"/><path d="M714.9 868.1L721.2 865.7"/></g><g fill="#cfe04a"><circle cx="706.9" cy="772.2" r="1.4"/><circle cx="711.7" cy="776.7" r="1.6"/><circle cx="706.9" cy="781.5" r="1.2"/><circle cx="711.7" cy="784.1" r="1.7"/><circle cx="709.9" cy="794.6" r="1.2"/><circle cx="705.7" cy="757.5" r="1.6"/><circle cx="710.5" cy="762.9" r="1.1"/></g><g fill="#d3e35a" opacity=".7"><circle cx="708.7" cy="821.5" r="1.7"/><circle cx="710.8" cy="829.3" r="1.2"/><circle cx="708.1" cy="838.8" r="1.9"/><circle cx="711.3" cy="816.7" r="1"/></g><ellipse cx="893.9" cy="877.9" rx="11" ry="6.2" fill="#b9bccf"/><ellipse cx="888.6" cy="874.7" rx="11.4" ry="3.6" fill="#9c9c9c"/><path d="M876.6 761.7L876.6 873.5Q888 877.1 898.7 873.5L898.7 761.7Z" fill="#a9a9a9"/><path d="M877.8 803.8L877.8 871.9Q887.4 875 896.6 871.9L896.6 803.8Z" fill="#992a98"/><ellipse cx="887.1" cy="804.3" rx="9.4" ry="2.2" fill="#b35ab5"/><ellipse cx="888.6" cy="760.5" rx="13.4" ry="4.8" fill="#d6d6d6"/><g stroke="#e6c6e8" stroke-width="1" stroke-linecap="round"><path d="M877.4 808.7L883.8 810.9"/><path d="M877.4 818L883.8 820.2"/><path d="M877.4 827.3L883.8 829.5"/><path d="M877.4 836.7L883.8 838.8"/><path d="M877.4 846L883.8 848.1"/><path d="M877.4 855.3L883.8 857.5"/></g><g fill="#a44aa6"><circle cx="890.9" cy="769.5" r="1.2"/><circle cx="886.2" cy="777.9" r="1.4"/><circle cx="890.9" cy="783.2" r="1.1"/><circle cx="886.2" cy="791.6" r="1.4"/><circle cx="888.6" cy="796.6" r="1.2"/><circle cx="892.1" cy="755.8" r="1.1"/><circle cx="887" cy="760.5" r="1"/></g><g fill="#b05ab2" opacity=".8"><circle cx="889.8" cy="820.1" r="1.2"/><circle cx="886.5" cy="827.2" r="1.1"/><circle cx="889.8" cy="836.4" r="1.7"/><circle cx="886.2" cy="814.9" r="0.8"/></g><ellipse cx="804.3" cy="876.5" rx="26.9" ry="6.6" fill="#c7bfd6"/><path d="M772 803.8L774.7 807.1L774.7 874.7Q775.6 878.9 781.6 879.1L827.6 879.1Q834.2 878.9 834.8 874.7L834.8 804.8Z" fill="#a9a9a9"/><path d="M777.8 823.9L777.8 872.9Q778.2 876.5 782.8 876.9L826.8 876.9Q831.3 876.5 831.8 872.9L831.8 823.9Z" fill="#ee3a78"/><ellipse cx="804.8" cy="824.1" rx="27" ry="6" fill="#f0608f"/><path d="M771.1 803.6Q773.2 796.4 803.7 796.4Q835.4 796.6 835.1 804.4Q834.2 811.9 803.7 811.9Q775.6 811.9 774.4 807.1Z" fill="#d8d8d8"/><g stroke="#fbd3e0" stroke-width="1.2" stroke-linecap="round"><path d="M795.9 823.6Q804.3 825.6 812.7 823.6" fill="none"/><path d="M798.6 831.8Q804.3 833.7 810 831.8" fill="none"/><path d="M795.9 839.9Q804.3 841.8 812.7 839.9" fill="none"/><path d="M798.6 848Q804.3 849.9 810 848" fill="none"/><path d="M795.9 856.2Q804.3 858.1 812.7 856.2" fill="none"/><path d="M798.6 864.3Q804.3 866.2 810 864.3" fill="none"/><path d="M795.9 872.4Q804.3 874.3 812.7 872.4" fill="none"/></g><g fill="#ee6a98"><circle cx="799.5" cy="804.4" r="1.2"/><circle cx="813.9" cy="800.6" r="1.4"/><circle cx="820.4" cy="807.7" r="2.4"/><circle cx="819.8" cy="796.4" r="1.4"/></g><g fill="#f47aa3" opacity=".75"><circle cx="821.6" cy="842.4" r="3.3"/><circle cx="818" cy="850.8" r="1.4"/><circle cx="790.6" cy="859.7" r="2.4"/><circle cx="784" cy="856.2" r="1.2"/><circle cx="787.6" cy="866.9" r="1.4"/></g><ellipse cx="750.5" cy="890.2" rx="34.9" ry="10.5" fill="#bcc0d6"/><path d="M741 802.4L741 839.4L718 884.8Q715.9 892 723 895.8Q750.5 904 778 895.8Q785.2 892 783 884.8L760.7 839.4L760.7 802.4Z" fill="#a9a9a9" fill-opacity=".93"/><path d="M734 853.2L720 882.4Q718 890.2 724.8 893.4Q750.5 901 776.2 893.4Q783 890.2 781 882.4L767 853.2Z" fill="#4fcdc4"/><ellipse cx="750.5" cy="852.9" rx="16.6" ry="3.3" fill="#7eddd6"/><ellipse cx="750.5" cy="802.4" rx="11" ry="4.5" fill="#d6d6d6"/><g stroke="#e3f7f5" stroke-width="1.2" stroke-linecap="round"><path d="M745.7 848Q750.5 849.7 755.3 848" fill="none"/><path d="M743.1 855.4Q750.5 857.1 757.9 855.4" fill="none"/><path d="M745.7 862.8Q750.5 864.5 755.3 862.8" fill="none"/><path d="M743.1 870.3Q750.5 871.9 757.9 870.3" fill="none"/><path d="M745.7 877.7Q750.5 879.3 755.3 877.7" fill="none"/><path d="M743.1 885.1Q750.5 886.7 757.9 885.1" fill="none"/><path d="M745.7 892.5Q750.5 894.2 755.3 892.5" fill="none"/></g><g fill="#6ed3cc"><circle cx="754.7" cy="810.7" r="2.6"/><circle cx="754.1" cy="828.1" r="2.4"/><circle cx="746.9" cy="826.9" r="1.4"/><circle cx="747.5" cy="834.6" r="1.2"/><circle cx="752.3" cy="843.6" r="1.8"/><circle cx="746.1" cy="797.6" r="1.7"/></g><ellipse cx="856.3" cy="887.8" rx="34.7" ry="10.2" fill="#bcc0d6"/><path d="M846.1 800.2L846.1 839.4L824 882.4Q821.6 889.9 828.8 893.4Q856.3 901 883.8 893.4Q890.9 889.9 888.6 882.4L866.4 839.4L866.4 800.2Z" fill="#a9a9a9" fill-opacity=".93"/><path d="M842.3 848.7L826 880.7Q824 887.8 830.8 891Q856.3 898.2 882 891Q888.6 887.8 886.8 880.7L870.5 848.7Z" fill="#fcd600"/><ellipse cx="856.4" cy="848.5" rx="14.2" ry="3.2" fill="#fde352"/><ellipse cx="856.3" cy="800" rx="11" ry="4.5" fill="#d6d6d6"/><g stroke="#fff6c4" stroke-width="1.2" stroke-linecap="round"><path d="M851.5 851.4Q856.3 853 861.1 851.4" fill="none"/><path d="M848.9 858.8Q856.3 860.5 863.7 858.8" fill="none"/><path d="M851.5 866.2Q856.3 867.9 861.1 866.2" fill="none"/><path d="M848.9 873.6Q856.3 875.3 863.7 873.6" fill="none"/><path d="M851.5 881Q856.3 882.7 861.1 881" fill="none"/><path d="M848.9 888.4Q856.3 890.1 863.7 888.4" fill="none"/></g><g fill="#fbe04a"><circle cx="852.1" cy="808.3" r="3"/><circle cx="852.7" cy="825.7" r="2.4"/><circle cx="859.9" cy="823.9" r="1.6"/><circle cx="858.7" cy="831.6" r="1.4"/><circle cx="854.3" cy="840.6" r="1.9"/><circle cx="860.5" cy="795.2" r="1.8"/></g></g><g transform="translate(0 0)"><rect x="566" y="873.5" width="470" height="182" fill="rgb(200,205,255)" fill-opacity=".7"/><text x="803.5" y="977" text-anchor="middle" font-family="'Liberation Serif',serif" font-style="italic" font-size="66" fill="#fff" textLength="277" lengthAdjust="spacingAndGlyphs">Name's 8th</text><text transform="translate(801.5 1030) scale(.595 1)" text-anchor="middle" font-family="'Liberation Sans',sans-serif" font-weight="bold" font-size="54.5" fill="#ed3a78">BIRTHDAY EXPERIMENT</text></g><g transform="translate(-2 330)"><rect x="566" y="873.5" width="470" height="182" fill="rgb(200,205,255)" fill-opacity=".7"/><text x="803.5" y="977" text-anchor="middle" font-family="'Liberation Serif',serif" font-style="italic" font-size="66" fill="#fff" textLength="277" lengthAdjust="spacingAndGlyphs">Name's 8th</text><text transform="translate(801.5 1030) scale(.595 1)" text-anchor="middle" font-family="'Liberation Sans',sans-serif" font-weight="bold" font-size="54.5" fill="#ed3a78">BIRTHDAY EXPERIMENT</text></g></svg><div style="position:absolute;left:568px;top:52px;width:300px;height:260px;font-family:'Liberation Sans',sans-serif;font-weight:bold;color:#92278f;filter:url(#h2of);white-space:nowrap"><span style="position:absolute;left:14.8px;top:6.4px;font-size:217.4px;line-height:1;transform:scaleX(.614);transform-origin:0 0">H</span><span style="position:absolute;left:121.2px;top:121.2px;font-size:139px;line-height:1;transform:scaleX(.717);transform-origin:0 0">2</span><span style="position:absolute;left:190.2px;top:6.9px;font-size:215.1px;line-height:1;transform:scaleX(.506);transform-origin:0 0">O</span></div>
</div>
<div id="scroll"></div>
<div id="thumb"></div>
<div id="panel"></div>
<div class="abs" style="left:1548px;top:208px;width:458px;height:333px;background:#fff;border-top:2px solid #bdbdbd;border-bottom:2px solid #a9a9a9"></div>
<svg class="abs" style="left:1572px;top:184px" width="46" height="28" viewBox="0 0 46 28"><path d="M0 25 L8 25 L23 4 L38 25 L46 25" fill="none" stroke="#bdbdbd" stroke-width="2"/><path d="M8.5 26.5 L23 6 L37.5 26.5 Z" fill="#fff"/></svg>
<svg class="abs" style="left:1586px;top:159px" width="18" height="14" viewBox="0 0 18 14"><path d="M1.5 1 L16.5 1 L9 13Z" fill="#222"/></svg>
<div class="stxt" style="left:1620px;top:151px">Fill &amp; Sign Tools</div>
<div class="abs" style="left:1595px;top:239px;font-family:'Liberation Serif',serif;font-weight:bold;font-size:42.5px;line-height:50px;color:#444;transform:scaleX(.82);transform-origin:0 0">T</div>
<div class="ptxt" style="left:1649px;top:256px;letter-spacing:.45px">Add Text</div>
<div class="abs" style="left:1590px;top:320px;width:36px;height:35px;background:linear-gradient(#fff,#ececec);border:1px solid #c9c9c9;box-shadow:0 1px 1px rgba(0,0,0,.15)"></div>
<svg class="abs" style="left:1590px;top:320px" width="36" height="35" viewBox="0 0 36 35"><path d="M6 18 L9 16 L14 23 Q20 12 30 5 L31 7 Q22 16 15 30 L13 30 Z" fill="#3c3c3c"/></svg>
<div class="ptxt" style="left:1649px;top:328px">Add Checkmark</div>
<div class="abs" style="left:1588px;top:396px;width:40px;height:26px;background:#f4f4f4;border:2px solid #3a3a3a;box-shadow:0 1px 1px rgba(0,0,0,.3)"></div>
<div class="abs" style="left:1588px;top:396px;width:40px;height:26px;text-align:center;font-style:italic;font-weight:bold;font-size:19px;line-height:26px;color:#2a2a2a;letter-spacing:-.5px">LM</div>
<div class="ptxt" style="left:1649px;top:400px">Place Initials</div>
<div class="abs" style="left:1588px;top:470px;width:40px;height:26px;background:#f4f4f4;border:2px solid #3a3a3a;box-shadow:0 1px 1px rgba(0,0,0,.3)"></div>
<svg class="abs" style="left:1588px;top:470px" width="40" height="26" viewBox="0 0 40 26"><path d="M6 18 Q12 16 16 7 Q13 12 13 18 Q16 13 19 14 Q19 18 22 16 Q25 13 27 16 L33 15" fill="none" stroke="#2a2a2a" stroke-width="2"/></svg>
<div class="ptxt" style="left:1649px;top:474px">Place Signature</div>
<svg class="abs" style="left:1587px;top:575px" width="14" height="16" viewBox="0 0 14 16"><path d="M1 1 L13 8 L1 15Z" fill="#222"/></svg>
<div class="stxt" style="left:1620px;top:567px">Send or Collect Signatures</div>
<svg class="abs" style="left:1587px;top:627px" width="14" height="16" viewBox="0 0 14 16"><path d="M1 1 L13 8 L1 15Z" fill="#222"/></svg>
<div class="stxt" style="left:1621px;top:619px">Work with Certificates</div>
</div>
<div class="abs" style="left:2006px;top:0;width:2px;height:1474px;background:linear-gradient(#c4c4c4 0,#b4b4b0 413px,#3c3c40 415px,#3c3c40 538px,#7f8f22 541px,#7f8f22 594px,#2c2288 597px,#2c2288 643px,#c6c6c6 646px,#cdcdcd 1474px)"></div>
</body></html>
